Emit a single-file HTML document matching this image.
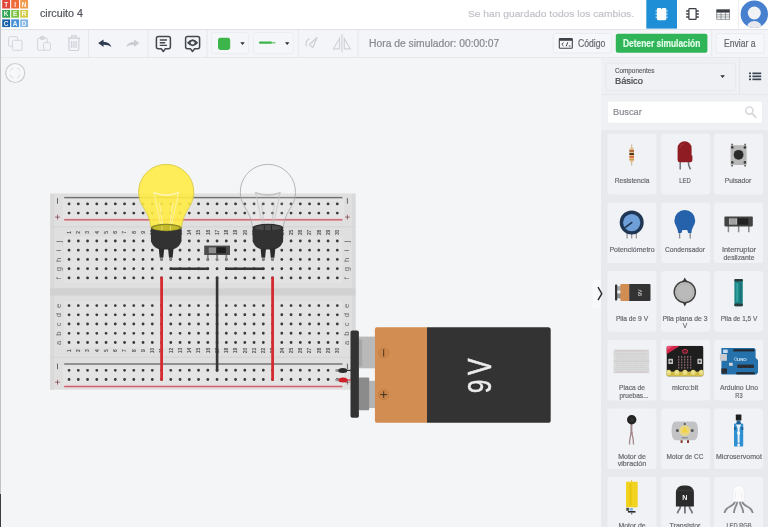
<!DOCTYPE html>
<html lang="es">
<head>
<meta charset="utf-8">
<title>circuito 4</title>
<style>
*{box-sizing:border-box;margin:0;padding:0}
html,body{width:768px;height:527px;overflow:hidden;background:#f4f5f7;font-family:"Liberation Sans",sans-serif;}
#app{position:relative;width:768px;height:527px;overflow:hidden;background:#f4f5f7;will-change:transform}
#app>div,#app>svg,#app>span{position:absolute}
#topbar{left:0;top:0;width:768px;height:29px;background:#fff}
#toolbar{left:0;top:28.5px;width:768px;height:29.5px;background:#f4f5f8;border-top:1px solid #e2e3e7;border-bottom:1px solid #e7e8ec}
#canvas{left:0;top:58px;width:601px;height:469px;background:#f4f5f7}
#panel{left:600.6px;top:58px;width:167.4px;height:469px;background:#eff0f3}
#plist{left:600.6px;top:129.5px;width:167.4px;height:398px;background:#e7e9ed}
#leftedge2{left:0;top:494px;width:1px;height:33px;background:#3c3c3e}
#leftedge{left:0;top:0;width:0.9px;height:527px;background:#c2c2c2}
.t{position:absolute;white-space:nowrap;line-height:12px;height:12px;margin-top:-6px;display:block;-webkit-text-stroke:0.2px currentColor}
.c{text-align:center}
.tile{background:#f1f2f5;border-radius:3px;width:49.200px;height:61.200px}
.sep{width:1px;background:#e4e5e9}
.btn{border-radius:2px}
svg{overflow:visible}
svg text{font-family:"Liberation Sans",sans-serif}
</style>
</head>
<body>
<div id="app">
<div id="topbar"></div><div id="toolbar"></div><div id="canvas"></div><div id="panel"></div><div id="plist"></div>
<svg id="gfx" width="768" height="527" viewBox="0 0 768 527" style="left:0;top:0">
<rect x="605.800" y="63.300" width="129.600" height="27" rx="2" fill="#f0f1f4" stroke="#e5e6ea" stroke-width="0.800"/>
<path d="M720.300 75.300h4.600l-2.300 2.700z" fill="#2b2e33"/>
<rect x="739" y="58.500" width="0.800" height="36" fill="#e3e4e8"/>
<rect x="602" y="94" width="166" height="0.800" fill="#e5e6ea"/>
<g fill="#3a4654"><rect x="749" y="72.500" width="2" height="1.700"/><rect x="752.400" y="72.500" width="8.800" height="1.700"/><rect x="749" y="75.500" width="2" height="1.700"/><rect x="752.400" y="75.500" width="8.800" height="1.700"/><rect x="749" y="78.500" width="2" height="1.700"/><rect x="752.400" y="78.500" width="8.800" height="1.700"/></g>
<rect x="608" y="101.800" width="154" height="21" rx="1.500" fill="#ffffff"/>
<g fill="none" stroke="#d8dade" stroke-width="1.700"><circle cx="749.400" cy="110.600" r="3.600"/><path d="M752.300 113.600l3.300 3.500" stroke-width="2.100" stroke-linecap="round"/></g>
<path d="M594.500 280h6.300v28h-6.300a2 2 0 0 1-2-2v-24a2 2 0 0 1 2-2z" fill="#f8f9fb"/>
<path d="M598 287.200l3.800 6.500l-3.800 6.500" fill="none" stroke="#26282c" stroke-width="1.400"/>
<rect x="607.4" y="133.7" width="49" height="60.700" rx="3" fill="#f1f2f5"/>
<rect x="661.1" y="133.7" width="49" height="60.700" rx="3" fill="#f1f2f5"/>
<rect x="714.1" y="133.7" width="49" height="60.700" rx="3" fill="#f1f2f5"/>
<rect x="607.4" y="202.4" width="49" height="60.700" rx="3" fill="#f1f2f5"/>
<rect x="661.1" y="202.4" width="49" height="60.700" rx="3" fill="#f1f2f5"/>
<rect x="714.1" y="202.4" width="49" height="60.700" rx="3" fill="#f1f2f5"/>
<rect x="607.4" y="271.1" width="49" height="60.700" rx="3" fill="#f1f2f5"/>
<rect x="661.1" y="271.1" width="49" height="60.700" rx="3" fill="#f1f2f5"/>
<rect x="714.1" y="271.1" width="49" height="60.700" rx="3" fill="#f1f2f5"/>
<rect x="607.4" y="339.7" width="49" height="60.700" rx="3" fill="#f1f2f5"/>
<rect x="661.1" y="339.7" width="49" height="60.700" rx="3" fill="#f1f2f5"/>
<rect x="714.1" y="339.7" width="49" height="60.700" rx="3" fill="#f1f2f5"/>
<rect x="607.4" y="408.4" width="49" height="60.700" rx="3" fill="#f1f2f5"/>
<rect x="661.1" y="408.4" width="49" height="60.700" rx="3" fill="#f1f2f5"/>
<rect x="714.1" y="408.4" width="49" height="60.700" rx="3" fill="#f1f2f5"/>
<rect x="607.4" y="476.9" width="49" height="60.700" rx="3" fill="#f1f2f5"/>
<rect x="661.1" y="476.9" width="49" height="60.700" rx="3" fill="#f1f2f5"/>
<rect x="714.1" y="476.9" width="49" height="60.700" rx="3" fill="#f1f2f5"/>
<g><path d="M631.7 144.400v21.200" stroke="#c7b08e" stroke-width="1"/><rect x="629.4000000000001" y="147.600" width="4.600" height="14.400" rx="2" fill="#e4c08d"/><rect x="629.4000000000001" y="150.200" width="4.600" height="1.500" fill="#a0522d"/><rect x="629.4000000000001" y="153.200" width="4.600" height="1.600" fill="#2a1a12"/><rect x="629.4000000000001" y="156.200" width="4.600" height="1.500" fill="#d9542b"/><rect x="629.4000000000001" y="159" width="4.600" height="1.200" fill="#c9a24a"/></g>
<g><path d="M680.2 161v8.400M688.4 161l0.300 4.400l1.800 4" stroke="#6f7177" stroke-width="1.500" fill="none"/><path d="M677.6 159.300v-11.100a7 7 0 0 1 14 0v7.200h0.800v4.600a2.200 2.200 0 0 1-2.200 2.200h-10.400a2.200 2.200 0 0 1-2.200-2.200z" fill="#8f1c22"/><path d="M680.0 147.500a4.600 4.600 0 0 1 3.600-3.600" stroke="#a8343a" stroke-width="1" fill="none"/></g>
<g><path d="M732.1 143.800v22.600M745.1 143.800v22.600" stroke="#4a4a4a" stroke-width="1.500"/><rect x="730.6" y="145.200" width="16" height="19.800" fill="#b7b7b7"/><circle cx="738.6" cy="154.800" r="4.900" fill="#2a2a2a"/><circle cx="732.3000000000001" cy="147.400" r="1.300" fill="#3c3c3c"/><circle cx="744.9" cy="147.400" r="1.300" fill="#3c3c3c"/><circle cx="732.3000000000001" cy="162.400" r="1.300" fill="#3c3c3c"/><circle cx="744.9" cy="162.400" r="1.300" fill="#3c3c3c"/></g>
<g><path d="M627.1 233v5.500M631.7 233v5.500M636.3000000000001 233v5.500" stroke="#8d9096" stroke-width="1.200"/><circle cx="631.7" cy="222.600" r="12" fill="#1f3654"/><circle cx="631.7" cy="222.600" r="8.600" fill="#6e9fd9"/><path d="M631.7 222.600l-6.400 4.800" stroke="#1f3654" stroke-width="1.800" stroke-linecap="round"/></g>
<g><path d="M679.5999999999999 229v9.500M690.1999999999999 229v9.500" stroke="#8d9096" stroke-width="1.400"/><path d="M674.4 220.400a10.400 10.400 0 0 1 20.800 0c0 4.500-3.200 6-3.800 12.500h-3.200l-1-2.800h-4.800l-1 2.800h-3.200c-0.600-6.500-3.800-8-3.800-12.500z" fill="#2562ab"/></g>
<g><path d="M728.4 226v6.200M738.6 226v6.200M748.8000000000001 226v6.200" stroke="#8a8a8a" stroke-width="1.500"/><rect x="724.4" y="216.600" width="28.400" height="9.800" rx="0.800" fill="#424242"/><rect x="729.0" y="218.300" width="19.200" height="6.400" fill="#222"/><rect x="729.0" y="218.300" width="8.200" height="6.400" fill="#b5b5b5"/><path d="M731.0 218.300v6.400M733.0 218.300v6.400M735.0 218.300v6.400" stroke="#7d7d7d" stroke-width="0.700"/></g>
<g><rect x="617" y="286.200" width="4" height="4.400" fill="#a9a9a9"/><rect x="617" y="293.400" width="4" height="5" fill="#8e8e8e"/><rect x="615" y="284.600" width="2.200" height="15.800" rx="0.600" fill="#333"/><path d="M621.200 284h8v17h-8a0.800 0.800 0 0 1-0.800-0.800v-15.400a0.800 0.800 0 0 1 0.800-0.800z" fill="#d18d52"/><path d="M629.200 284h20.400a0.900 0.900 0 0 1 0.900 0.900v15.200a0.900 0.900 0 0 1-0.900 0.900h-20.400z" fill="#333"/><text transform="translate(641.600 292.600) rotate(-90)" text-anchor="middle" font-size="5.400" fill="#e6e6e6">9V</text></g>
<g><path d="M680.5999999999999 282.200q3.200-1.400 4.200-4.600q1 3.200 4.200 4.600zM680.5999999999999 301.800q3.200 1.400 4.200 4.600q1-3.200 4.200-4.600z" fill="#3a3a3a"/><circle cx="684.8" cy="292" r="11.300" fill="#404040"/><circle cx="684.8" cy="292" r="9.900" fill="#bababa"/><circle cx="684.8" cy="292" r="8.200" fill="none" stroke="#adadad" stroke-width="0.800"/></g>
<g><rect x="734.4" y="279" width="8.400" height="27.200" rx="1.200" fill="#1d8486"/><rect x="734.4" y="279" width="8.400" height="2.600" rx="1" fill="#2c3b3c"/><rect x="734.4" y="303.400" width="8.400" height="2.800" rx="1" fill="#2c3b3c"/><rect x="736.2" y="283.200" width="2" height="18.600" fill="#3aa9a6" fill-opacity="0.8"/><rect x="740.2" y="283.200" width="1.200" height="18.600" fill="#16696b"/></g>
<g><rect x="613.600" y="349.600" width="35.600" height="23.600" fill="#dadada"/><rect x="613.600" y="353" width="35.600" height="0.600" fill="#cdcdcd"/><rect x="613.600" y="369.400" width="35.600" height="0.600" fill="#cdcdcd"/><rect x="613.600" y="360.600" width="35.600" height="1.400" fill="#cfcfcf"/><rect x="615.500" y="350.700" width="31.800" height="0.500" fill="#c9b0b0"/><rect x="615.500" y="371.800" width="31.800" height="0.500" fill="#c9b0b0"/><path d="M616 355.200h30.800M616 357.200h30.800M616 359h30.800M616 363.600h30.800M616 365.600h30.800M616 367.400h30.800" stroke="#c9c9c9" stroke-width="0.600" stroke-dasharray="0.7 0.500"/></g>
<g><clipPath id="mb"><rect x="666.5" y="345.800" width="37" height="30.700" rx="2"/></clipPath><g clip-path="url(#mb)"><rect x="666.5" y="345.800" width="37" height="30.700" fill="#1e1e1e"/><path d="M666.5 345.800h13.500l-13.500 8.500z" fill="#d8264a"/><path d="M666.5 345.800h7l-7 4.500z" fill="#e8557a"/><rect x="666.5" y="371.600" width="37" height="5" fill="#cdb848"/><circle cx="668.6" cy="372.400" r="2.600" fill="#e6d875"/><circle cx="668.6" cy="372.200" r="0.900" fill="#f4ecb0"/><circle cx="676.8" cy="372.400" r="2.600" fill="#e6d875"/><circle cx="676.8" cy="372.200" r="0.900" fill="#f4ecb0"/><circle cx="685.0" cy="372.400" r="2.600" fill="#e6d875"/><circle cx="685.0" cy="372.200" r="0.900" fill="#f4ecb0"/><circle cx="693.2" cy="372.400" r="2.600" fill="#e6d875"/><circle cx="693.2" cy="372.200" r="0.900" fill="#f4ecb0"/><circle cx="701.4" cy="372.400" r="2.600" fill="#e6d875"/><circle cx="701.4" cy="372.200" r="0.900" fill="#f4ecb0"/></g><rect x="668.4" y="358.800" width="4.600" height="5.200" rx="0.600" fill="#c4c4c4"/><rect x="697.4" y="358.800" width="4.600" height="5.200" rx="0.600" fill="#c4c4c4"/><circle cx="670.7" cy="361.400" r="1.100" fill="#333"/><circle cx="699.7" cy="361.400" r="1.100" fill="#333"/><rect x="682.4" y="349.600" width="5.200" height="3.600" rx="1.600" fill="#5a1a26" stroke="#d23c56" stroke-width="0.900"/><rect x="678.1" y="356.0" width="1.200" height="1.800" fill="#8a6a70"/><rect x="681.1" y="356.0" width="1.200" height="1.800" fill="#8a6a70"/><rect x="684.1" y="356.0" width="1.200" height="1.800" fill="#8a6a70"/><rect x="687.1" y="356.0" width="1.200" height="1.800" fill="#8a6a70"/><rect x="690.1" y="356.0" width="1.200" height="1.800" fill="#8a6a70"/><rect x="678.1" y="358.7" width="1.200" height="1.800" fill="#8a6a70"/><rect x="681.1" y="358.7" width="1.200" height="1.800" fill="#8a6a70"/><rect x="684.1" y="358.7" width="1.200" height="1.800" fill="#8a6a70"/><rect x="687.1" y="358.7" width="1.200" height="1.800" fill="#8a6a70"/><rect x="690.1" y="358.7" width="1.200" height="1.800" fill="#8a6a70"/><rect x="678.1" y="361.4" width="1.200" height="1.800" fill="#8a6a70"/><rect x="681.1" y="361.4" width="1.200" height="1.800" fill="#8a6a70"/><rect x="684.1" y="361.4" width="1.200" height="1.800" fill="#8a6a70"/><rect x="687.1" y="361.4" width="1.200" height="1.800" fill="#8a6a70"/><rect x="690.1" y="361.4" width="1.200" height="1.800" fill="#8a6a70"/><rect x="678.1" y="364.1" width="1.200" height="1.800" fill="#8a6a70"/><rect x="681.1" y="364.1" width="1.200" height="1.800" fill="#8a6a70"/><rect x="684.1" y="364.1" width="1.200" height="1.800" fill="#8a6a70"/><rect x="687.1" y="364.1" width="1.200" height="1.800" fill="#8a6a70"/><rect x="690.1" y="364.1" width="1.200" height="1.800" fill="#8a6a70"/><rect x="678.1" y="366.8" width="1.200" height="1.800" fill="#8a6a70"/><rect x="681.1" y="366.8" width="1.200" height="1.800" fill="#8a6a70"/><rect x="684.1" y="366.8" width="1.200" height="1.800" fill="#8a6a70"/><rect x="687.1" y="366.8" width="1.200" height="1.800" fill="#8a6a70"/><rect x="690.1" y="366.8" width="1.200" height="1.800" fill="#8a6a70"/></g>
<g><path d="M721.4000000000001 348h32.800l1.400 1.400v8.400l2.400 2.200v12.400l-1.600 2.200h-35z" fill="#2571ab"/><rect x="719.9000000000001" y="354" width="7" height="6.800" fill="#c9ccd0"/><rect x="721.4000000000001" y="368.400" width="5.600" height="5.200" fill="#2b2f35"/><rect x="733.3000000000001" y="349.200" width="21" height="2.200" fill="#23272c"/><rect x="736.3000000000001" y="372.200" width="18.400" height="2.200" fill="#23272c"/><rect x="737.3000000000001" y="364.600" width="16.600" height="3.400" fill="#2a2e33"/><rect x="723.1" y="349.600" width="4.600" height="3.400" fill="#c8dcef"/><text x="741.9000000000001" y="360.800" text-anchor="middle" font-size="4.400" font-weight="700" fill="#d6e8f7">UNO</text><circle cx="735.7" cy="359" r="1.500" fill="none" stroke="#d6e8f7" stroke-width="0.500"/><rect x="729.1" y="362.800" width="3.600" height="3" fill="#d4d8dc"/></g>
<g><path d="M631.4000000000001 424v9.500" fill="none" stroke="#a08a8c" stroke-width="2"/><path d="M631.1 432c0 4-1.800 5-1.600 12.600M631.9000000000001 432c0 4 1.800 5 1.600 12.600" fill="none" stroke="#a4888a" stroke-width="1.300"/><circle cx="631.7" cy="419.800" r="4.700" fill="#222"/><circle cx="631.7" cy="419.800" r="2.400" fill="#303030"/></g>
<g><rect x="680.5999999999999" y="439" width="2" height="4" fill="#8a3a2e"/><rect x="687.0" y="439" width="2" height="4" fill="#8a3a2e"/><path d="M675.8 421.400h18c3 0 4.200 4 4.200 9.400s-1.200 9.400-4.200 9.400h-18c-3 0-4.200-4-4.200-9.400s1.200-9.400 4.200-9.400z" fill="#c3c3c6"/><rect x="681.8" y="437.200" width="6" height="1.200" fill="#8a8a8a"/><circle cx="684.8" cy="430.600" r="5.400" fill="#e9d685"/><path d="M684.8 426.800l3.200 5.600h-6.400z" fill="#f3d23c"/><circle cx="677.4" cy="430.600" r="1.500" fill="#555"/><circle cx="692.1999999999999" cy="430.600" r="1.500" fill="#555"/><circle cx="684.8" cy="424" r="1.200" fill="#666"/></g>
<g><rect x="734.0" y="423.600" width="9.200" height="23" rx="0.800" fill="#2e8fd1"/><rect x="735.8000000000001" y="414.600" width="5.600" height="6" rx="0.600" fill="#1f1f1f"/><path d="M737.0 420.400h3.200l1 4h-5.200z" fill="#1c5f96"/><path d="M736.0 424.500l2.600 6l2.600-6z" fill="#e9f1f8"/><rect x="737.6" y="428" width="2" height="15" rx="1" fill="#e9f1f8"/><circle cx="738.6" cy="433" r="1.600" fill="#f5f9fc"/><rect x="734.0" y="427" width="1.800" height="3" fill="#1c5f96"/><rect x="741.4" y="427" width="1.800" height="3" fill="#1c5f96"/><rect x="737.4" y="443.600" width="2.400" height="3" fill="#f2f3f5"/></g>
<g><rect x="631.3000000000001" y="480.200" width="0.800" height="2" fill="#caa800"/><rect x="626.0" y="481.800" width="11.700" height="25.600" rx="0.800" fill="#f2d31f"/><rect x="629.3000000000001" y="483.500" width="2.400" height="22" fill="#e9c70f"/><rect x="626.5" y="507.600" width="10.400" height="3.400" fill="#f0f0f0"/><rect x="626.3000000000001" y="507.800" width="2.600" height="3" fill="#4a4a4a"/><rect x="629.5" y="508.200" width="3.400" height="2.400" fill="#7ab0e0"/><rect x="627.9000000000001" y="511" width="7.600" height="1.600" fill="#2b2b2b"/><rect x="631.1" y="512.600" width="1.200" height="1.800" fill="#666"/></g>
<g><path d="M680.3 505v2c0 2.500-2.600 3-2.800 6.400M684.9 505v8.400M689.5 505v2c0 2.500 2.600 3 2.800 6.400" fill="none" stroke="#74777d" stroke-width="1.800"/><path d="M675.9 506.400v-13.800a7.200 7.200 0 0 1 7.200-7.200h3.600a7.200 7.200 0 0 1 7.200 7.200v13.800z" fill="#2b2b2b"/><path d="M675.9 490.600h18" stroke="#444" stroke-width="0.600"/><text x="684.9" y="500.200" text-anchor="middle" font-size="7.200" font-weight="700" fill="#f2f2f2">N</text></g>
<g><path d="M735.2 501c-1 6.500-10 4.500-10.800 12M737.4 501c0 5-3.400 6-3.400 12M739.8000000000001 501c0 5 3.400 6 3.400 12M742.0 501c1 6.500 10 4.500 10.800 12" fill="none" stroke="#85888d" stroke-width="1.800"/><path d="M732.8000000000001 501.600v-10.400a5.800 5.800 0 0 1 11.600 0v10.400z" fill="#fbfbfc" stroke="#e9eaec" stroke-width="0.600"/><path d="M735.4 492.500v6M741.8000000000001 492.500v6" stroke="#ededf0" stroke-width="1"/></g>
<rect x="50.3" y="193.0" width="305.2" height="196.7" fill="#dfdfdf"/>
<rect x="62.5" y="199" width="281.5" height="19.5" fill="#e4e4e4"/>
<rect x="62.5" y="365.5" width="281.5" height="19.5" fill="#e4e4e4"/>
<rect x="64" y="236.5" width="278" height="46.5" fill="#e3e3e3"/>
<rect x="64" y="301" width="278" height="46.5" fill="#e3e3e3"/>
<rect x="50.3" y="193.0" width="3.6" height="196.7" fill="#d9d9d9"/>
<rect x="352.1" y="193.0" width="3.4" height="196.7" fill="#d9d9d9"/>
<rect x="50.3" y="193.0" width="305.2" height="1" fill="#e9e9e9"/>
<rect x="50.3" y="226.4" width="305.2" height="0.9" fill="#d3d3d3"/>
<rect x="50.3" y="356.8" width="305.2" height="0.9" fill="#d3d3d3"/>
<rect x="50.3" y="288.3" width="305.2" height="7.2" fill="#d1d1d1"/>
<rect x="64.2" y="196.9" width="278.2" height="1.4" fill="#707070"/>
<rect x="64.2" y="363.3" width="278.2" height="1.4" fill="#707070"/>
<rect x="64.2" y="218.0" width="278.2" height="3.4" fill="#edd5d8"/>
<rect x="64.2" y="219.1" width="278.2" height="1.4" fill="#c4636d"/>
<rect x="64.2" y="384.7" width="278.2" height="3.4" fill="#edd5d8"/>
<rect x="64.2" y="385.8" width="278.2" height="1.4" fill="#c4636d"/>
<path fill="#3a3a3a" d="M67.63 203.9a1.42 1.42 0 1 0 2.84 0a1.42 1.42 0 1 0-2.84 0zM76.88 203.9a1.42 1.42 0 1 0 2.84 0a1.42 1.42 0 1 0-2.84 0zM86.13 203.9a1.42 1.42 0 1 0 2.84 0a1.42 1.42 0 1 0-2.84 0zM95.38 203.9a1.42 1.42 0 1 0 2.84 0a1.42 1.42 0 1 0-2.84 0zM104.63 203.9a1.42 1.42 0 1 0 2.84 0a1.42 1.42 0 1 0-2.84 0zM113.88 203.9a1.42 1.42 0 1 0 2.84 0a1.42 1.42 0 1 0-2.84 0zM123.13 203.9a1.42 1.42 0 1 0 2.84 0a1.42 1.42 0 1 0-2.84 0zM132.38 203.9a1.42 1.42 0 1 0 2.84 0a1.42 1.42 0 1 0-2.84 0zM141.63 203.9a1.42 1.42 0 1 0 2.84 0a1.42 1.42 0 1 0-2.84 0zM150.88 203.9a1.42 1.42 0 1 0 2.84 0a1.42 1.42 0 1 0-2.84 0zM160.13 203.9a1.42 1.42 0 1 0 2.84 0a1.42 1.42 0 1 0-2.84 0zM169.38 203.9a1.42 1.42 0 1 0 2.84 0a1.42 1.42 0 1 0-2.84 0zM178.63 203.9a1.42 1.42 0 1 0 2.84 0a1.42 1.42 0 1 0-2.84 0zM187.88 203.9a1.42 1.42 0 1 0 2.84 0a1.42 1.42 0 1 0-2.84 0zM197.13 203.9a1.42 1.42 0 1 0 2.84 0a1.42 1.42 0 1 0-2.84 0zM206.38 203.9a1.42 1.42 0 1 0 2.84 0a1.42 1.42 0 1 0-2.84 0zM215.63 203.9a1.42 1.42 0 1 0 2.84 0a1.42 1.42 0 1 0-2.84 0zM224.88 203.9a1.42 1.42 0 1 0 2.84 0a1.42 1.42 0 1 0-2.84 0zM234.13 203.9a1.42 1.42 0 1 0 2.84 0a1.42 1.42 0 1 0-2.84 0zM243.38 203.9a1.42 1.42 0 1 0 2.84 0a1.42 1.42 0 1 0-2.84 0zM252.63 203.9a1.42 1.42 0 1 0 2.84 0a1.42 1.42 0 1 0-2.84 0zM261.88 203.9a1.42 1.42 0 1 0 2.84 0a1.42 1.42 0 1 0-2.84 0zM271.13 203.9a1.42 1.42 0 1 0 2.84 0a1.42 1.42 0 1 0-2.84 0zM280.38 203.9a1.42 1.42 0 1 0 2.84 0a1.42 1.42 0 1 0-2.84 0zM289.63 203.9a1.42 1.42 0 1 0 2.84 0a1.42 1.42 0 1 0-2.84 0zM298.88 203.9a1.42 1.42 0 1 0 2.84 0a1.42 1.42 0 1 0-2.84 0zM308.13 203.9a1.42 1.42 0 1 0 2.84 0a1.42 1.42 0 1 0-2.84 0zM317.38 203.9a1.42 1.42 0 1 0 2.84 0a1.42 1.42 0 1 0-2.84 0zM326.63 203.9a1.42 1.42 0 1 0 2.84 0a1.42 1.42 0 1 0-2.84 0zM335.88 203.9a1.42 1.42 0 1 0 2.84 0a1.42 1.42 0 1 0-2.84 0zM67.63 213.1a1.42 1.42 0 1 0 2.84 0a1.42 1.42 0 1 0-2.84 0zM76.88 213.1a1.42 1.42 0 1 0 2.84 0a1.42 1.42 0 1 0-2.84 0zM86.13 213.1a1.42 1.42 0 1 0 2.84 0a1.42 1.42 0 1 0-2.84 0zM95.38 213.1a1.42 1.42 0 1 0 2.84 0a1.42 1.42 0 1 0-2.84 0zM104.63 213.1a1.42 1.42 0 1 0 2.84 0a1.42 1.42 0 1 0-2.84 0zM113.88 213.1a1.42 1.42 0 1 0 2.84 0a1.42 1.42 0 1 0-2.84 0zM123.13 213.1a1.42 1.42 0 1 0 2.84 0a1.42 1.42 0 1 0-2.84 0zM132.38 213.1a1.42 1.42 0 1 0 2.84 0a1.42 1.42 0 1 0-2.84 0zM141.63 213.1a1.42 1.42 0 1 0 2.84 0a1.42 1.42 0 1 0-2.84 0zM150.88 213.1a1.42 1.42 0 1 0 2.84 0a1.42 1.42 0 1 0-2.84 0zM160.13 213.1a1.42 1.42 0 1 0 2.84 0a1.42 1.42 0 1 0-2.84 0zM169.38 213.1a1.42 1.42 0 1 0 2.84 0a1.42 1.42 0 1 0-2.84 0zM178.63 213.1a1.42 1.42 0 1 0 2.84 0a1.42 1.42 0 1 0-2.84 0zM187.88 213.1a1.42 1.42 0 1 0 2.84 0a1.42 1.42 0 1 0-2.84 0zM197.13 213.1a1.42 1.42 0 1 0 2.84 0a1.42 1.42 0 1 0-2.84 0zM206.38 213.1a1.42 1.42 0 1 0 2.84 0a1.42 1.42 0 1 0-2.84 0zM215.63 213.1a1.42 1.42 0 1 0 2.84 0a1.42 1.42 0 1 0-2.84 0zM224.88 213.1a1.42 1.42 0 1 0 2.84 0a1.42 1.42 0 1 0-2.84 0zM234.13 213.1a1.42 1.42 0 1 0 2.84 0a1.42 1.42 0 1 0-2.84 0zM243.38 213.1a1.42 1.42 0 1 0 2.84 0a1.42 1.42 0 1 0-2.84 0zM252.63 213.1a1.42 1.42 0 1 0 2.84 0a1.42 1.42 0 1 0-2.84 0zM261.88 213.1a1.42 1.42 0 1 0 2.84 0a1.42 1.42 0 1 0-2.84 0zM271.13 213.1a1.42 1.42 0 1 0 2.84 0a1.42 1.42 0 1 0-2.84 0zM280.38 213.1a1.42 1.42 0 1 0 2.84 0a1.42 1.42 0 1 0-2.84 0zM289.63 213.1a1.42 1.42 0 1 0 2.84 0a1.42 1.42 0 1 0-2.84 0zM298.88 213.1a1.42 1.42 0 1 0 2.84 0a1.42 1.42 0 1 0-2.84 0zM308.13 213.1a1.42 1.42 0 1 0 2.84 0a1.42 1.42 0 1 0-2.84 0zM317.38 213.1a1.42 1.42 0 1 0 2.84 0a1.42 1.42 0 1 0-2.84 0zM326.63 213.1a1.42 1.42 0 1 0 2.84 0a1.42 1.42 0 1 0-2.84 0zM335.88 213.1a1.42 1.42 0 1 0 2.84 0a1.42 1.42 0 1 0-2.84 0zM67.63 370.3a1.42 1.42 0 1 0 2.84 0a1.42 1.42 0 1 0-2.84 0zM76.88 370.3a1.42 1.42 0 1 0 2.84 0a1.42 1.42 0 1 0-2.84 0zM86.13 370.3a1.42 1.42 0 1 0 2.84 0a1.42 1.42 0 1 0-2.84 0zM95.38 370.3a1.42 1.42 0 1 0 2.84 0a1.42 1.42 0 1 0-2.84 0zM104.63 370.3a1.42 1.42 0 1 0 2.84 0a1.42 1.42 0 1 0-2.84 0zM113.88 370.3a1.42 1.42 0 1 0 2.84 0a1.42 1.42 0 1 0-2.84 0zM123.13 370.3a1.42 1.42 0 1 0 2.84 0a1.42 1.42 0 1 0-2.84 0zM132.38 370.3a1.42 1.42 0 1 0 2.84 0a1.42 1.42 0 1 0-2.84 0zM141.63 370.3a1.42 1.42 0 1 0 2.84 0a1.42 1.42 0 1 0-2.84 0zM150.88 370.3a1.42 1.42 0 1 0 2.84 0a1.42 1.42 0 1 0-2.84 0zM160.13 370.3a1.42 1.42 0 1 0 2.84 0a1.42 1.42 0 1 0-2.84 0zM169.38 370.3a1.42 1.42 0 1 0 2.84 0a1.42 1.42 0 1 0-2.84 0zM178.63 370.3a1.42 1.42 0 1 0 2.84 0a1.42 1.42 0 1 0-2.84 0zM187.88 370.3a1.42 1.42 0 1 0 2.84 0a1.42 1.42 0 1 0-2.84 0zM197.13 370.3a1.42 1.42 0 1 0 2.84 0a1.42 1.42 0 1 0-2.84 0zM206.38 370.3a1.42 1.42 0 1 0 2.84 0a1.42 1.42 0 1 0-2.84 0zM215.63 370.3a1.42 1.42 0 1 0 2.84 0a1.42 1.42 0 1 0-2.84 0zM224.88 370.3a1.42 1.42 0 1 0 2.84 0a1.42 1.42 0 1 0-2.84 0zM234.13 370.3a1.42 1.42 0 1 0 2.84 0a1.42 1.42 0 1 0-2.84 0zM243.38 370.3a1.42 1.42 0 1 0 2.84 0a1.42 1.42 0 1 0-2.84 0zM252.63 370.3a1.42 1.42 0 1 0 2.84 0a1.42 1.42 0 1 0-2.84 0zM261.88 370.3a1.42 1.42 0 1 0 2.84 0a1.42 1.42 0 1 0-2.84 0zM271.13 370.3a1.42 1.42 0 1 0 2.84 0a1.42 1.42 0 1 0-2.84 0zM280.38 370.3a1.42 1.42 0 1 0 2.84 0a1.42 1.42 0 1 0-2.84 0zM289.63 370.3a1.42 1.42 0 1 0 2.84 0a1.42 1.42 0 1 0-2.84 0zM298.88 370.3a1.42 1.42 0 1 0 2.84 0a1.42 1.42 0 1 0-2.84 0zM308.13 370.3a1.42 1.42 0 1 0 2.84 0a1.42 1.42 0 1 0-2.84 0zM317.38 370.3a1.42 1.42 0 1 0 2.84 0a1.42 1.42 0 1 0-2.84 0zM326.63 370.3a1.42 1.42 0 1 0 2.84 0a1.42 1.42 0 1 0-2.84 0zM335.88 370.3a1.42 1.42 0 1 0 2.84 0a1.42 1.42 0 1 0-2.84 0zM67.63 379.5a1.42 1.42 0 1 0 2.84 0a1.42 1.42 0 1 0-2.84 0zM76.88 379.5a1.42 1.42 0 1 0 2.84 0a1.42 1.42 0 1 0-2.84 0zM86.13 379.5a1.42 1.42 0 1 0 2.84 0a1.42 1.42 0 1 0-2.84 0zM95.38 379.5a1.42 1.42 0 1 0 2.84 0a1.42 1.42 0 1 0-2.84 0zM104.63 379.5a1.42 1.42 0 1 0 2.84 0a1.42 1.42 0 1 0-2.84 0zM113.88 379.5a1.42 1.42 0 1 0 2.84 0a1.42 1.42 0 1 0-2.84 0zM123.13 379.5a1.42 1.42 0 1 0 2.84 0a1.42 1.42 0 1 0-2.84 0zM132.38 379.5a1.42 1.42 0 1 0 2.84 0a1.42 1.42 0 1 0-2.84 0zM141.63 379.5a1.42 1.42 0 1 0 2.84 0a1.42 1.42 0 1 0-2.84 0zM150.88 379.5a1.42 1.42 0 1 0 2.84 0a1.42 1.42 0 1 0-2.84 0zM160.13 379.5a1.42 1.42 0 1 0 2.84 0a1.42 1.42 0 1 0-2.84 0zM169.38 379.5a1.42 1.42 0 1 0 2.84 0a1.42 1.42 0 1 0-2.84 0zM178.63 379.5a1.42 1.42 0 1 0 2.84 0a1.42 1.42 0 1 0-2.84 0zM187.88 379.5a1.42 1.42 0 1 0 2.84 0a1.42 1.42 0 1 0-2.84 0zM197.13 379.5a1.42 1.42 0 1 0 2.84 0a1.42 1.42 0 1 0-2.84 0zM206.38 379.5a1.42 1.42 0 1 0 2.84 0a1.42 1.42 0 1 0-2.84 0zM215.63 379.5a1.42 1.42 0 1 0 2.84 0a1.42 1.42 0 1 0-2.84 0zM224.88 379.5a1.42 1.42 0 1 0 2.84 0a1.42 1.42 0 1 0-2.84 0zM234.13 379.5a1.42 1.42 0 1 0 2.84 0a1.42 1.42 0 1 0-2.84 0zM243.38 379.5a1.42 1.42 0 1 0 2.84 0a1.42 1.42 0 1 0-2.84 0zM252.63 379.5a1.42 1.42 0 1 0 2.84 0a1.42 1.42 0 1 0-2.84 0zM261.88 379.5a1.42 1.42 0 1 0 2.84 0a1.42 1.42 0 1 0-2.84 0zM271.13 379.5a1.42 1.42 0 1 0 2.84 0a1.42 1.42 0 1 0-2.84 0zM280.38 379.5a1.42 1.42 0 1 0 2.84 0a1.42 1.42 0 1 0-2.84 0zM289.63 379.5a1.42 1.42 0 1 0 2.84 0a1.42 1.42 0 1 0-2.84 0zM298.88 379.5a1.42 1.42 0 1 0 2.84 0a1.42 1.42 0 1 0-2.84 0zM308.13 379.5a1.42 1.42 0 1 0 2.84 0a1.42 1.42 0 1 0-2.84 0zM317.38 379.5a1.42 1.42 0 1 0 2.84 0a1.42 1.42 0 1 0-2.84 0zM326.63 379.5a1.42 1.42 0 1 0 2.84 0a1.42 1.42 0 1 0-2.84 0zM335.88 379.5a1.42 1.42 0 1 0 2.84 0a1.42 1.42 0 1 0-2.84 0zM67.63 241.0a1.42 1.42 0 1 0 2.84 0a1.42 1.42 0 1 0-2.84 0zM76.88 241.0a1.42 1.42 0 1 0 2.84 0a1.42 1.42 0 1 0-2.84 0zM86.13 241.0a1.42 1.42 0 1 0 2.84 0a1.42 1.42 0 1 0-2.84 0zM95.38 241.0a1.42 1.42 0 1 0 2.84 0a1.42 1.42 0 1 0-2.84 0zM104.63 241.0a1.42 1.42 0 1 0 2.84 0a1.42 1.42 0 1 0-2.84 0zM113.88 241.0a1.42 1.42 0 1 0 2.84 0a1.42 1.42 0 1 0-2.84 0zM123.13 241.0a1.42 1.42 0 1 0 2.84 0a1.42 1.42 0 1 0-2.84 0zM132.38 241.0a1.42 1.42 0 1 0 2.84 0a1.42 1.42 0 1 0-2.84 0zM141.63 241.0a1.42 1.42 0 1 0 2.84 0a1.42 1.42 0 1 0-2.84 0zM150.88 241.0a1.42 1.42 0 1 0 2.84 0a1.42 1.42 0 1 0-2.84 0zM160.13 241.0a1.42 1.42 0 1 0 2.84 0a1.42 1.42 0 1 0-2.84 0zM169.38 241.0a1.42 1.42 0 1 0 2.84 0a1.42 1.42 0 1 0-2.84 0zM178.63 241.0a1.42 1.42 0 1 0 2.84 0a1.42 1.42 0 1 0-2.84 0zM187.88 241.0a1.42 1.42 0 1 0 2.84 0a1.42 1.42 0 1 0-2.84 0zM197.13 241.0a1.42 1.42 0 1 0 2.84 0a1.42 1.42 0 1 0-2.84 0zM206.38 241.0a1.42 1.42 0 1 0 2.84 0a1.42 1.42 0 1 0-2.84 0zM215.63 241.0a1.42 1.42 0 1 0 2.84 0a1.42 1.42 0 1 0-2.84 0zM224.88 241.0a1.42 1.42 0 1 0 2.84 0a1.42 1.42 0 1 0-2.84 0zM234.13 241.0a1.42 1.42 0 1 0 2.84 0a1.42 1.42 0 1 0-2.84 0zM243.38 241.0a1.42 1.42 0 1 0 2.84 0a1.42 1.42 0 1 0-2.84 0zM252.63 241.0a1.42 1.42 0 1 0 2.84 0a1.42 1.42 0 1 0-2.84 0zM261.88 241.0a1.42 1.42 0 1 0 2.84 0a1.42 1.42 0 1 0-2.84 0zM271.13 241.0a1.42 1.42 0 1 0 2.84 0a1.42 1.42 0 1 0-2.84 0zM280.38 241.0a1.42 1.42 0 1 0 2.84 0a1.42 1.42 0 1 0-2.84 0zM289.63 241.0a1.42 1.42 0 1 0 2.84 0a1.42 1.42 0 1 0-2.84 0zM298.88 241.0a1.42 1.42 0 1 0 2.84 0a1.42 1.42 0 1 0-2.84 0zM308.13 241.0a1.42 1.42 0 1 0 2.84 0a1.42 1.42 0 1 0-2.84 0zM317.38 241.0a1.42 1.42 0 1 0 2.84 0a1.42 1.42 0 1 0-2.84 0zM326.63 241.0a1.42 1.42 0 1 0 2.84 0a1.42 1.42 0 1 0-2.84 0zM335.88 241.0a1.42 1.42 0 1 0 2.84 0a1.42 1.42 0 1 0-2.84 0zM67.63 250.2a1.42 1.42 0 1 0 2.84 0a1.42 1.42 0 1 0-2.84 0zM76.88 250.2a1.42 1.42 0 1 0 2.84 0a1.42 1.42 0 1 0-2.84 0zM86.13 250.2a1.42 1.42 0 1 0 2.84 0a1.42 1.42 0 1 0-2.84 0zM95.38 250.2a1.42 1.42 0 1 0 2.84 0a1.42 1.42 0 1 0-2.84 0zM104.63 250.2a1.42 1.42 0 1 0 2.84 0a1.42 1.42 0 1 0-2.84 0zM113.88 250.2a1.42 1.42 0 1 0 2.84 0a1.42 1.42 0 1 0-2.84 0zM123.13 250.2a1.42 1.42 0 1 0 2.84 0a1.42 1.42 0 1 0-2.84 0zM132.38 250.2a1.42 1.42 0 1 0 2.84 0a1.42 1.42 0 1 0-2.84 0zM141.63 250.2a1.42 1.42 0 1 0 2.84 0a1.42 1.42 0 1 0-2.84 0zM150.88 250.2a1.42 1.42 0 1 0 2.84 0a1.42 1.42 0 1 0-2.84 0zM160.13 250.2a1.42 1.42 0 1 0 2.84 0a1.42 1.42 0 1 0-2.84 0zM169.38 250.2a1.42 1.42 0 1 0 2.84 0a1.42 1.42 0 1 0-2.84 0zM178.63 250.2a1.42 1.42 0 1 0 2.84 0a1.42 1.42 0 1 0-2.84 0zM187.88 250.2a1.42 1.42 0 1 0 2.84 0a1.42 1.42 0 1 0-2.84 0zM197.13 250.2a1.42 1.42 0 1 0 2.84 0a1.42 1.42 0 1 0-2.84 0zM206.38 250.2a1.42 1.42 0 1 0 2.84 0a1.42 1.42 0 1 0-2.84 0zM215.63 250.2a1.42 1.42 0 1 0 2.84 0a1.42 1.42 0 1 0-2.84 0zM224.88 250.2a1.42 1.42 0 1 0 2.84 0a1.42 1.42 0 1 0-2.84 0zM234.13 250.2a1.42 1.42 0 1 0 2.84 0a1.42 1.42 0 1 0-2.84 0zM243.38 250.2a1.42 1.42 0 1 0 2.84 0a1.42 1.42 0 1 0-2.84 0zM252.63 250.2a1.42 1.42 0 1 0 2.84 0a1.42 1.42 0 1 0-2.84 0zM261.88 250.2a1.42 1.42 0 1 0 2.84 0a1.42 1.42 0 1 0-2.84 0zM271.13 250.2a1.42 1.42 0 1 0 2.84 0a1.42 1.42 0 1 0-2.84 0zM280.38 250.2a1.42 1.42 0 1 0 2.84 0a1.42 1.42 0 1 0-2.84 0zM289.63 250.2a1.42 1.42 0 1 0 2.84 0a1.42 1.42 0 1 0-2.84 0zM298.88 250.2a1.42 1.42 0 1 0 2.84 0a1.42 1.42 0 1 0-2.84 0zM308.13 250.2a1.42 1.42 0 1 0 2.84 0a1.42 1.42 0 1 0-2.84 0zM317.38 250.2a1.42 1.42 0 1 0 2.84 0a1.42 1.42 0 1 0-2.84 0zM326.63 250.2a1.42 1.42 0 1 0 2.84 0a1.42 1.42 0 1 0-2.84 0zM335.88 250.2a1.42 1.42 0 1 0 2.84 0a1.42 1.42 0 1 0-2.84 0zM67.63 259.4a1.42 1.42 0 1 0 2.84 0a1.42 1.42 0 1 0-2.84 0zM76.88 259.4a1.42 1.42 0 1 0 2.84 0a1.42 1.42 0 1 0-2.84 0zM86.13 259.4a1.42 1.42 0 1 0 2.84 0a1.42 1.42 0 1 0-2.84 0zM95.38 259.4a1.42 1.42 0 1 0 2.84 0a1.42 1.42 0 1 0-2.84 0zM104.63 259.4a1.42 1.42 0 1 0 2.84 0a1.42 1.42 0 1 0-2.84 0zM113.88 259.4a1.42 1.42 0 1 0 2.84 0a1.42 1.42 0 1 0-2.84 0zM123.13 259.4a1.42 1.42 0 1 0 2.84 0a1.42 1.42 0 1 0-2.84 0zM132.38 259.4a1.42 1.42 0 1 0 2.84 0a1.42 1.42 0 1 0-2.84 0zM141.63 259.4a1.42 1.42 0 1 0 2.84 0a1.42 1.42 0 1 0-2.84 0zM150.88 259.4a1.42 1.42 0 1 0 2.84 0a1.42 1.42 0 1 0-2.84 0zM160.13 259.4a1.42 1.42 0 1 0 2.84 0a1.42 1.42 0 1 0-2.84 0zM169.38 259.4a1.42 1.42 0 1 0 2.84 0a1.42 1.42 0 1 0-2.84 0zM178.63 259.4a1.42 1.42 0 1 0 2.84 0a1.42 1.42 0 1 0-2.84 0zM187.88 259.4a1.42 1.42 0 1 0 2.84 0a1.42 1.42 0 1 0-2.84 0zM197.13 259.4a1.42 1.42 0 1 0 2.84 0a1.42 1.42 0 1 0-2.84 0zM206.38 259.4a1.42 1.42 0 1 0 2.84 0a1.42 1.42 0 1 0-2.84 0zM215.63 259.4a1.42 1.42 0 1 0 2.84 0a1.42 1.42 0 1 0-2.84 0zM224.88 259.4a1.42 1.42 0 1 0 2.84 0a1.42 1.42 0 1 0-2.84 0zM234.13 259.4a1.42 1.42 0 1 0 2.84 0a1.42 1.42 0 1 0-2.84 0zM243.38 259.4a1.42 1.42 0 1 0 2.84 0a1.42 1.42 0 1 0-2.84 0zM252.63 259.4a1.42 1.42 0 1 0 2.84 0a1.42 1.42 0 1 0-2.84 0zM261.88 259.4a1.42 1.42 0 1 0 2.84 0a1.42 1.42 0 1 0-2.84 0zM271.13 259.4a1.42 1.42 0 1 0 2.84 0a1.42 1.42 0 1 0-2.84 0zM280.38 259.4a1.42 1.42 0 1 0 2.84 0a1.42 1.42 0 1 0-2.84 0zM289.63 259.4a1.42 1.42 0 1 0 2.84 0a1.42 1.42 0 1 0-2.84 0zM298.88 259.4a1.42 1.42 0 1 0 2.84 0a1.42 1.42 0 1 0-2.84 0zM308.13 259.4a1.42 1.42 0 1 0 2.84 0a1.42 1.42 0 1 0-2.84 0zM317.38 259.4a1.42 1.42 0 1 0 2.84 0a1.42 1.42 0 1 0-2.84 0zM326.63 259.4a1.42 1.42 0 1 0 2.84 0a1.42 1.42 0 1 0-2.84 0zM335.88 259.4a1.42 1.42 0 1 0 2.84 0a1.42 1.42 0 1 0-2.84 0zM67.63 268.7a1.42 1.42 0 1 0 2.84 0a1.42 1.42 0 1 0-2.84 0zM76.88 268.7a1.42 1.42 0 1 0 2.84 0a1.42 1.42 0 1 0-2.84 0zM86.13 268.7a1.42 1.42 0 1 0 2.84 0a1.42 1.42 0 1 0-2.84 0zM95.38 268.7a1.42 1.42 0 1 0 2.84 0a1.42 1.42 0 1 0-2.84 0zM104.63 268.7a1.42 1.42 0 1 0 2.84 0a1.42 1.42 0 1 0-2.84 0zM113.88 268.7a1.42 1.42 0 1 0 2.84 0a1.42 1.42 0 1 0-2.84 0zM123.13 268.7a1.42 1.42 0 1 0 2.84 0a1.42 1.42 0 1 0-2.84 0zM132.38 268.7a1.42 1.42 0 1 0 2.84 0a1.42 1.42 0 1 0-2.84 0zM141.63 268.7a1.42 1.42 0 1 0 2.84 0a1.42 1.42 0 1 0-2.84 0zM150.88 268.7a1.42 1.42 0 1 0 2.84 0a1.42 1.42 0 1 0-2.84 0zM160.13 268.7a1.42 1.42 0 1 0 2.84 0a1.42 1.42 0 1 0-2.84 0zM169.38 268.7a1.42 1.42 0 1 0 2.84 0a1.42 1.42 0 1 0-2.84 0zM178.63 268.7a1.42 1.42 0 1 0 2.84 0a1.42 1.42 0 1 0-2.84 0zM187.88 268.7a1.42 1.42 0 1 0 2.84 0a1.42 1.42 0 1 0-2.84 0zM197.13 268.7a1.42 1.42 0 1 0 2.84 0a1.42 1.42 0 1 0-2.84 0zM206.38 268.7a1.42 1.42 0 1 0 2.84 0a1.42 1.42 0 1 0-2.84 0zM215.63 268.7a1.42 1.42 0 1 0 2.84 0a1.42 1.42 0 1 0-2.84 0zM224.88 268.7a1.42 1.42 0 1 0 2.84 0a1.42 1.42 0 1 0-2.84 0zM234.13 268.7a1.42 1.42 0 1 0 2.84 0a1.42 1.42 0 1 0-2.84 0zM243.38 268.7a1.42 1.42 0 1 0 2.84 0a1.42 1.42 0 1 0-2.84 0zM252.63 268.7a1.42 1.42 0 1 0 2.84 0a1.42 1.42 0 1 0-2.84 0zM261.88 268.7a1.42 1.42 0 1 0 2.84 0a1.42 1.42 0 1 0-2.84 0zM271.13 268.7a1.42 1.42 0 1 0 2.84 0a1.42 1.42 0 1 0-2.84 0zM280.38 268.7a1.42 1.42 0 1 0 2.84 0a1.42 1.42 0 1 0-2.84 0zM289.63 268.7a1.42 1.42 0 1 0 2.84 0a1.42 1.42 0 1 0-2.84 0zM298.88 268.7a1.42 1.42 0 1 0 2.84 0a1.42 1.42 0 1 0-2.84 0zM308.13 268.7a1.42 1.42 0 1 0 2.84 0a1.42 1.42 0 1 0-2.84 0zM317.38 268.7a1.42 1.42 0 1 0 2.84 0a1.42 1.42 0 1 0-2.84 0zM326.63 268.7a1.42 1.42 0 1 0 2.84 0a1.42 1.42 0 1 0-2.84 0zM335.88 268.7a1.42 1.42 0 1 0 2.84 0a1.42 1.42 0 1 0-2.84 0zM67.63 277.9a1.42 1.42 0 1 0 2.84 0a1.42 1.42 0 1 0-2.84 0zM76.88 277.9a1.42 1.42 0 1 0 2.84 0a1.42 1.42 0 1 0-2.84 0zM86.13 277.9a1.42 1.42 0 1 0 2.84 0a1.42 1.42 0 1 0-2.84 0zM95.38 277.9a1.42 1.42 0 1 0 2.84 0a1.42 1.42 0 1 0-2.84 0zM104.63 277.9a1.42 1.42 0 1 0 2.84 0a1.42 1.42 0 1 0-2.84 0zM113.88 277.9a1.42 1.42 0 1 0 2.84 0a1.42 1.42 0 1 0-2.84 0zM123.13 277.9a1.42 1.42 0 1 0 2.84 0a1.42 1.42 0 1 0-2.84 0zM132.38 277.9a1.42 1.42 0 1 0 2.84 0a1.42 1.42 0 1 0-2.84 0zM141.63 277.9a1.42 1.42 0 1 0 2.84 0a1.42 1.42 0 1 0-2.84 0zM150.88 277.9a1.42 1.42 0 1 0 2.84 0a1.42 1.42 0 1 0-2.84 0zM160.13 277.9a1.42 1.42 0 1 0 2.84 0a1.42 1.42 0 1 0-2.84 0zM169.38 277.9a1.42 1.42 0 1 0 2.84 0a1.42 1.42 0 1 0-2.84 0zM178.63 277.9a1.42 1.42 0 1 0 2.84 0a1.42 1.42 0 1 0-2.84 0zM187.88 277.9a1.42 1.42 0 1 0 2.84 0a1.42 1.42 0 1 0-2.84 0zM197.13 277.9a1.42 1.42 0 1 0 2.84 0a1.42 1.42 0 1 0-2.84 0zM206.38 277.9a1.42 1.42 0 1 0 2.84 0a1.42 1.42 0 1 0-2.84 0zM215.63 277.9a1.42 1.42 0 1 0 2.84 0a1.42 1.42 0 1 0-2.84 0zM224.88 277.9a1.42 1.42 0 1 0 2.84 0a1.42 1.42 0 1 0-2.84 0zM234.13 277.9a1.42 1.42 0 1 0 2.84 0a1.42 1.42 0 1 0-2.84 0zM243.38 277.9a1.42 1.42 0 1 0 2.84 0a1.42 1.42 0 1 0-2.84 0zM252.63 277.9a1.42 1.42 0 1 0 2.84 0a1.42 1.42 0 1 0-2.84 0zM261.88 277.9a1.42 1.42 0 1 0 2.84 0a1.42 1.42 0 1 0-2.84 0zM271.13 277.9a1.42 1.42 0 1 0 2.84 0a1.42 1.42 0 1 0-2.84 0zM280.38 277.9a1.42 1.42 0 1 0 2.84 0a1.42 1.42 0 1 0-2.84 0zM289.63 277.9a1.42 1.42 0 1 0 2.84 0a1.42 1.42 0 1 0-2.84 0zM298.88 277.9a1.42 1.42 0 1 0 2.84 0a1.42 1.42 0 1 0-2.84 0zM308.13 277.9a1.42 1.42 0 1 0 2.84 0a1.42 1.42 0 1 0-2.84 0zM317.38 277.9a1.42 1.42 0 1 0 2.84 0a1.42 1.42 0 1 0-2.84 0zM326.63 277.9a1.42 1.42 0 1 0 2.84 0a1.42 1.42 0 1 0-2.84 0zM335.88 277.9a1.42 1.42 0 1 0 2.84 0a1.42 1.42 0 1 0-2.84 0zM67.63 305.6a1.42 1.42 0 1 0 2.84 0a1.42 1.42 0 1 0-2.84 0zM76.88 305.6a1.42 1.42 0 1 0 2.84 0a1.42 1.42 0 1 0-2.84 0zM86.13 305.6a1.42 1.42 0 1 0 2.84 0a1.42 1.42 0 1 0-2.84 0zM95.38 305.6a1.42 1.42 0 1 0 2.84 0a1.42 1.42 0 1 0-2.84 0zM104.63 305.6a1.42 1.42 0 1 0 2.84 0a1.42 1.42 0 1 0-2.84 0zM113.88 305.6a1.42 1.42 0 1 0 2.84 0a1.42 1.42 0 1 0-2.84 0zM123.13 305.6a1.42 1.42 0 1 0 2.84 0a1.42 1.42 0 1 0-2.84 0zM132.38 305.6a1.42 1.42 0 1 0 2.84 0a1.42 1.42 0 1 0-2.84 0zM141.63 305.6a1.42 1.42 0 1 0 2.84 0a1.42 1.42 0 1 0-2.84 0zM150.88 305.6a1.42 1.42 0 1 0 2.84 0a1.42 1.42 0 1 0-2.84 0zM160.13 305.6a1.42 1.42 0 1 0 2.84 0a1.42 1.42 0 1 0-2.84 0zM169.38 305.6a1.42 1.42 0 1 0 2.84 0a1.42 1.42 0 1 0-2.84 0zM178.63 305.6a1.42 1.42 0 1 0 2.84 0a1.42 1.42 0 1 0-2.84 0zM187.88 305.6a1.42 1.42 0 1 0 2.84 0a1.42 1.42 0 1 0-2.84 0zM197.13 305.6a1.42 1.42 0 1 0 2.84 0a1.42 1.42 0 1 0-2.84 0zM206.38 305.6a1.42 1.42 0 1 0 2.84 0a1.42 1.42 0 1 0-2.84 0zM215.63 305.6a1.42 1.42 0 1 0 2.84 0a1.42 1.42 0 1 0-2.84 0zM224.88 305.6a1.42 1.42 0 1 0 2.84 0a1.42 1.42 0 1 0-2.84 0zM234.13 305.6a1.42 1.42 0 1 0 2.84 0a1.42 1.42 0 1 0-2.84 0zM243.38 305.6a1.42 1.42 0 1 0 2.84 0a1.42 1.42 0 1 0-2.84 0zM252.63 305.6a1.42 1.42 0 1 0 2.84 0a1.42 1.42 0 1 0-2.84 0zM261.88 305.6a1.42 1.42 0 1 0 2.84 0a1.42 1.42 0 1 0-2.84 0zM271.13 305.6a1.42 1.42 0 1 0 2.84 0a1.42 1.42 0 1 0-2.84 0zM280.38 305.6a1.42 1.42 0 1 0 2.84 0a1.42 1.42 0 1 0-2.84 0zM289.63 305.6a1.42 1.42 0 1 0 2.84 0a1.42 1.42 0 1 0-2.84 0zM298.88 305.6a1.42 1.42 0 1 0 2.84 0a1.42 1.42 0 1 0-2.84 0zM308.13 305.6a1.42 1.42 0 1 0 2.84 0a1.42 1.42 0 1 0-2.84 0zM317.38 305.6a1.42 1.42 0 1 0 2.84 0a1.42 1.42 0 1 0-2.84 0zM326.63 305.6a1.42 1.42 0 1 0 2.84 0a1.42 1.42 0 1 0-2.84 0zM335.88 305.6a1.42 1.42 0 1 0 2.84 0a1.42 1.42 0 1 0-2.84 0zM67.63 314.8a1.42 1.42 0 1 0 2.84 0a1.42 1.42 0 1 0-2.84 0zM76.88 314.8a1.42 1.42 0 1 0 2.84 0a1.42 1.42 0 1 0-2.84 0zM86.13 314.8a1.42 1.42 0 1 0 2.84 0a1.42 1.42 0 1 0-2.84 0zM95.38 314.8a1.42 1.42 0 1 0 2.84 0a1.42 1.42 0 1 0-2.84 0zM104.63 314.8a1.42 1.42 0 1 0 2.84 0a1.42 1.42 0 1 0-2.84 0zM113.88 314.8a1.42 1.42 0 1 0 2.84 0a1.42 1.42 0 1 0-2.84 0zM123.13 314.8a1.42 1.42 0 1 0 2.84 0a1.42 1.42 0 1 0-2.84 0zM132.38 314.8a1.42 1.42 0 1 0 2.84 0a1.42 1.42 0 1 0-2.84 0zM141.63 314.8a1.42 1.42 0 1 0 2.84 0a1.42 1.42 0 1 0-2.84 0zM150.88 314.8a1.42 1.42 0 1 0 2.84 0a1.42 1.42 0 1 0-2.84 0zM160.13 314.8a1.42 1.42 0 1 0 2.84 0a1.42 1.42 0 1 0-2.84 0zM169.38 314.8a1.42 1.42 0 1 0 2.84 0a1.42 1.42 0 1 0-2.84 0zM178.63 314.8a1.42 1.42 0 1 0 2.84 0a1.42 1.42 0 1 0-2.84 0zM187.88 314.8a1.42 1.42 0 1 0 2.84 0a1.42 1.42 0 1 0-2.84 0zM197.13 314.8a1.42 1.42 0 1 0 2.84 0a1.42 1.42 0 1 0-2.84 0zM206.38 314.8a1.42 1.42 0 1 0 2.84 0a1.42 1.42 0 1 0-2.84 0zM215.63 314.8a1.42 1.42 0 1 0 2.84 0a1.42 1.42 0 1 0-2.84 0zM224.88 314.8a1.42 1.42 0 1 0 2.84 0a1.42 1.42 0 1 0-2.84 0zM234.13 314.8a1.42 1.42 0 1 0 2.84 0a1.42 1.42 0 1 0-2.84 0zM243.38 314.8a1.42 1.42 0 1 0 2.84 0a1.42 1.42 0 1 0-2.84 0zM252.63 314.8a1.42 1.42 0 1 0 2.84 0a1.42 1.42 0 1 0-2.84 0zM261.88 314.8a1.42 1.42 0 1 0 2.84 0a1.42 1.42 0 1 0-2.84 0zM271.13 314.8a1.42 1.42 0 1 0 2.84 0a1.42 1.42 0 1 0-2.84 0zM280.38 314.8a1.42 1.42 0 1 0 2.84 0a1.42 1.42 0 1 0-2.84 0zM289.63 314.8a1.42 1.42 0 1 0 2.84 0a1.42 1.42 0 1 0-2.84 0zM298.88 314.8a1.42 1.42 0 1 0 2.84 0a1.42 1.42 0 1 0-2.84 0zM308.13 314.8a1.42 1.42 0 1 0 2.84 0a1.42 1.42 0 1 0-2.84 0zM317.38 314.8a1.42 1.42 0 1 0 2.84 0a1.42 1.42 0 1 0-2.84 0zM326.63 314.8a1.42 1.42 0 1 0 2.84 0a1.42 1.42 0 1 0-2.84 0zM335.88 314.8a1.42 1.42 0 1 0 2.84 0a1.42 1.42 0 1 0-2.84 0zM67.63 324.0a1.42 1.42 0 1 0 2.84 0a1.42 1.42 0 1 0-2.84 0zM76.88 324.0a1.42 1.42 0 1 0 2.84 0a1.42 1.42 0 1 0-2.84 0zM86.13 324.0a1.42 1.42 0 1 0 2.84 0a1.42 1.42 0 1 0-2.84 0zM95.38 324.0a1.42 1.42 0 1 0 2.84 0a1.42 1.42 0 1 0-2.84 0zM104.63 324.0a1.42 1.42 0 1 0 2.84 0a1.42 1.42 0 1 0-2.84 0zM113.88 324.0a1.42 1.42 0 1 0 2.84 0a1.42 1.42 0 1 0-2.84 0zM123.13 324.0a1.42 1.42 0 1 0 2.84 0a1.42 1.42 0 1 0-2.84 0zM132.38 324.0a1.42 1.42 0 1 0 2.84 0a1.42 1.42 0 1 0-2.84 0zM141.63 324.0a1.42 1.42 0 1 0 2.84 0a1.42 1.42 0 1 0-2.84 0zM150.88 324.0a1.42 1.42 0 1 0 2.84 0a1.42 1.42 0 1 0-2.84 0zM160.13 324.0a1.42 1.42 0 1 0 2.84 0a1.42 1.42 0 1 0-2.84 0zM169.38 324.0a1.42 1.42 0 1 0 2.84 0a1.42 1.42 0 1 0-2.84 0zM178.63 324.0a1.42 1.42 0 1 0 2.84 0a1.42 1.42 0 1 0-2.84 0zM187.88 324.0a1.42 1.42 0 1 0 2.84 0a1.42 1.42 0 1 0-2.84 0zM197.13 324.0a1.42 1.42 0 1 0 2.84 0a1.42 1.42 0 1 0-2.84 0zM206.38 324.0a1.42 1.42 0 1 0 2.84 0a1.42 1.42 0 1 0-2.84 0zM215.63 324.0a1.42 1.42 0 1 0 2.84 0a1.42 1.42 0 1 0-2.84 0zM224.88 324.0a1.42 1.42 0 1 0 2.84 0a1.42 1.42 0 1 0-2.84 0zM234.13 324.0a1.42 1.42 0 1 0 2.84 0a1.42 1.42 0 1 0-2.84 0zM243.38 324.0a1.42 1.42 0 1 0 2.84 0a1.42 1.42 0 1 0-2.84 0zM252.63 324.0a1.42 1.42 0 1 0 2.84 0a1.42 1.42 0 1 0-2.84 0zM261.88 324.0a1.42 1.42 0 1 0 2.84 0a1.42 1.42 0 1 0-2.84 0zM271.13 324.0a1.42 1.42 0 1 0 2.84 0a1.42 1.42 0 1 0-2.84 0zM280.38 324.0a1.42 1.42 0 1 0 2.84 0a1.42 1.42 0 1 0-2.84 0zM289.63 324.0a1.42 1.42 0 1 0 2.84 0a1.42 1.42 0 1 0-2.84 0zM298.88 324.0a1.42 1.42 0 1 0 2.84 0a1.42 1.42 0 1 0-2.84 0zM308.13 324.0a1.42 1.42 0 1 0 2.84 0a1.42 1.42 0 1 0-2.84 0zM317.38 324.0a1.42 1.42 0 1 0 2.84 0a1.42 1.42 0 1 0-2.84 0zM326.63 324.0a1.42 1.42 0 1 0 2.84 0a1.42 1.42 0 1 0-2.84 0zM335.88 324.0a1.42 1.42 0 1 0 2.84 0a1.42 1.42 0 1 0-2.84 0zM67.63 333.3a1.42 1.42 0 1 0 2.84 0a1.42 1.42 0 1 0-2.84 0zM76.88 333.3a1.42 1.42 0 1 0 2.84 0a1.42 1.42 0 1 0-2.84 0zM86.13 333.3a1.42 1.42 0 1 0 2.84 0a1.42 1.42 0 1 0-2.84 0zM95.38 333.3a1.42 1.42 0 1 0 2.84 0a1.42 1.42 0 1 0-2.84 0zM104.63 333.3a1.42 1.42 0 1 0 2.84 0a1.42 1.42 0 1 0-2.84 0zM113.88 333.3a1.42 1.42 0 1 0 2.84 0a1.42 1.42 0 1 0-2.84 0zM123.13 333.3a1.42 1.42 0 1 0 2.84 0a1.42 1.42 0 1 0-2.84 0zM132.38 333.3a1.42 1.42 0 1 0 2.84 0a1.42 1.42 0 1 0-2.84 0zM141.63 333.3a1.42 1.42 0 1 0 2.84 0a1.42 1.42 0 1 0-2.84 0zM150.88 333.3a1.42 1.42 0 1 0 2.84 0a1.42 1.42 0 1 0-2.84 0zM160.13 333.3a1.42 1.42 0 1 0 2.84 0a1.42 1.42 0 1 0-2.84 0zM169.38 333.3a1.42 1.42 0 1 0 2.84 0a1.42 1.42 0 1 0-2.84 0zM178.63 333.3a1.42 1.42 0 1 0 2.84 0a1.42 1.42 0 1 0-2.84 0zM187.88 333.3a1.42 1.42 0 1 0 2.84 0a1.42 1.42 0 1 0-2.84 0zM197.13 333.3a1.42 1.42 0 1 0 2.84 0a1.42 1.42 0 1 0-2.84 0zM206.38 333.3a1.42 1.42 0 1 0 2.84 0a1.42 1.42 0 1 0-2.84 0zM215.63 333.3a1.42 1.42 0 1 0 2.84 0a1.42 1.42 0 1 0-2.84 0zM224.88 333.3a1.42 1.42 0 1 0 2.84 0a1.42 1.42 0 1 0-2.84 0zM234.13 333.3a1.42 1.42 0 1 0 2.84 0a1.42 1.42 0 1 0-2.84 0zM243.38 333.3a1.42 1.42 0 1 0 2.84 0a1.42 1.42 0 1 0-2.84 0zM252.63 333.3a1.42 1.42 0 1 0 2.84 0a1.42 1.42 0 1 0-2.84 0zM261.88 333.3a1.42 1.42 0 1 0 2.84 0a1.42 1.42 0 1 0-2.84 0zM271.13 333.3a1.42 1.42 0 1 0 2.84 0a1.42 1.42 0 1 0-2.84 0zM280.38 333.3a1.42 1.42 0 1 0 2.84 0a1.42 1.42 0 1 0-2.84 0zM289.63 333.3a1.42 1.42 0 1 0 2.84 0a1.42 1.42 0 1 0-2.84 0zM298.88 333.3a1.42 1.42 0 1 0 2.84 0a1.42 1.42 0 1 0-2.84 0zM308.13 333.3a1.42 1.42 0 1 0 2.84 0a1.42 1.42 0 1 0-2.84 0zM317.38 333.3a1.42 1.42 0 1 0 2.84 0a1.42 1.42 0 1 0-2.84 0zM326.63 333.3a1.42 1.42 0 1 0 2.84 0a1.42 1.42 0 1 0-2.84 0zM335.88 333.3a1.42 1.42 0 1 0 2.84 0a1.42 1.42 0 1 0-2.84 0zM67.63 342.5a1.42 1.42 0 1 0 2.84 0a1.42 1.42 0 1 0-2.84 0zM76.88 342.5a1.42 1.42 0 1 0 2.84 0a1.42 1.42 0 1 0-2.84 0zM86.13 342.5a1.42 1.42 0 1 0 2.84 0a1.42 1.42 0 1 0-2.84 0zM95.38 342.5a1.42 1.42 0 1 0 2.84 0a1.42 1.42 0 1 0-2.84 0zM104.63 342.5a1.42 1.42 0 1 0 2.84 0a1.42 1.42 0 1 0-2.84 0zM113.88 342.5a1.42 1.42 0 1 0 2.84 0a1.42 1.42 0 1 0-2.84 0zM123.13 342.5a1.42 1.42 0 1 0 2.84 0a1.42 1.42 0 1 0-2.84 0zM132.38 342.5a1.42 1.42 0 1 0 2.84 0a1.42 1.42 0 1 0-2.84 0zM141.63 342.5a1.42 1.42 0 1 0 2.84 0a1.42 1.42 0 1 0-2.84 0zM150.88 342.5a1.42 1.42 0 1 0 2.84 0a1.42 1.42 0 1 0-2.84 0zM160.13 342.5a1.42 1.42 0 1 0 2.84 0a1.42 1.42 0 1 0-2.84 0zM169.38 342.5a1.42 1.42 0 1 0 2.84 0a1.42 1.42 0 1 0-2.84 0zM178.63 342.5a1.42 1.42 0 1 0 2.84 0a1.42 1.42 0 1 0-2.84 0zM187.88 342.5a1.42 1.42 0 1 0 2.84 0a1.42 1.42 0 1 0-2.84 0zM197.13 342.5a1.42 1.42 0 1 0 2.84 0a1.42 1.42 0 1 0-2.84 0zM206.38 342.5a1.42 1.42 0 1 0 2.84 0a1.42 1.42 0 1 0-2.84 0zM215.63 342.5a1.42 1.42 0 1 0 2.84 0a1.42 1.42 0 1 0-2.84 0zM224.88 342.5a1.42 1.42 0 1 0 2.84 0a1.42 1.42 0 1 0-2.84 0zM234.13 342.5a1.42 1.42 0 1 0 2.84 0a1.42 1.42 0 1 0-2.84 0zM243.38 342.5a1.42 1.42 0 1 0 2.84 0a1.42 1.42 0 1 0-2.84 0zM252.63 342.5a1.42 1.42 0 1 0 2.84 0a1.42 1.42 0 1 0-2.84 0zM261.88 342.5a1.42 1.42 0 1 0 2.84 0a1.42 1.42 0 1 0-2.84 0zM271.13 342.5a1.42 1.42 0 1 0 2.84 0a1.42 1.42 0 1 0-2.84 0zM280.38 342.5a1.42 1.42 0 1 0 2.84 0a1.42 1.42 0 1 0-2.84 0zM289.63 342.5a1.42 1.42 0 1 0 2.84 0a1.42 1.42 0 1 0-2.84 0zM298.88 342.5a1.42 1.42 0 1 0 2.84 0a1.42 1.42 0 1 0-2.84 0zM308.13 342.5a1.42 1.42 0 1 0 2.84 0a1.42 1.42 0 1 0-2.84 0zM317.38 342.5a1.42 1.42 0 1 0 2.84 0a1.42 1.42 0 1 0-2.84 0zM326.63 342.5a1.42 1.42 0 1 0 2.84 0a1.42 1.42 0 1 0-2.84 0zM335.88 342.5a1.42 1.42 0 1 0 2.84 0a1.42 1.42 0 1 0-2.84 0z"/>
<rect x="57.00" y="198.1" width="1" height="5.6" fill="#666"/>
<rect x="57.00" y="363.6" width="1" height="5.6" fill="#666"/>
<circle cx="57.5" cy="217.1" r="3.2" fill="#f0dadd" fill-opacity="0.6"/>
<path d="M55.1 217.1h4.8M57.5 214.7v4.8" stroke="#5e3640" stroke-width="0.65" fill="none"/>
<circle cx="57.5" cy="382.2" r="3.2" fill="#f0dadd" fill-opacity="0.6"/>
<path d="M55.1 382.2h4.8M57.5 379.8v4.8" stroke="#5e3640" stroke-width="0.65" fill="none"/>
<rect x="346.90" y="198.1" width="1" height="5.6" fill="#666"/>
<rect x="346.90" y="363.6" width="1" height="5.6" fill="#666"/>
<circle cx="347.4" cy="217.1" r="3.2" fill="#f0dadd" fill-opacity="0.6"/>
<path d="M345.0 217.1h4.8M347.4 214.7v4.8" stroke="#5e3640" stroke-width="0.65" fill="none"/>
<circle cx="347.4" cy="382.2" r="3.2" fill="#f0dadd" fill-opacity="0.6"/>
<path d="M345.0 382.2h4.8M347.4 379.8v4.8" stroke="#5e3640" stroke-width="0.65" fill="none"/>
<text transform="translate(70.75 232.4) rotate(-90) scale(0.95 1)" text-anchor="middle" font-size="5.1" fill="#4c4c4c" stroke="#4c4c4c" stroke-width="0.12">1</text>
<text transform="translate(70.75 350.6) rotate(-90) scale(0.95 1)" text-anchor="middle" font-size="5.1" fill="#4c4c4c" stroke="#4c4c4c" stroke-width="0.12">1</text>
<text transform="translate(80.00 232.4) rotate(-90) scale(0.95 1)" text-anchor="middle" font-size="5.1" fill="#4c4c4c" stroke="#4c4c4c" stroke-width="0.12">2</text>
<text transform="translate(80.00 350.6) rotate(-90) scale(0.95 1)" text-anchor="middle" font-size="5.1" fill="#4c4c4c" stroke="#4c4c4c" stroke-width="0.12">2</text>
<text transform="translate(89.25 232.4) rotate(-90) scale(0.95 1)" text-anchor="middle" font-size="5.1" fill="#4c4c4c" stroke="#4c4c4c" stroke-width="0.12">3</text>
<text transform="translate(89.25 350.6) rotate(-90) scale(0.95 1)" text-anchor="middle" font-size="5.1" fill="#4c4c4c" stroke="#4c4c4c" stroke-width="0.12">3</text>
<text transform="translate(98.50 232.4) rotate(-90) scale(0.95 1)" text-anchor="middle" font-size="5.1" fill="#4c4c4c" stroke="#4c4c4c" stroke-width="0.12">4</text>
<text transform="translate(98.50 350.6) rotate(-90) scale(0.95 1)" text-anchor="middle" font-size="5.1" fill="#4c4c4c" stroke="#4c4c4c" stroke-width="0.12">4</text>
<text transform="translate(107.75 232.4) rotate(-90) scale(0.95 1)" text-anchor="middle" font-size="5.1" fill="#4c4c4c" stroke="#4c4c4c" stroke-width="0.12">5</text>
<text transform="translate(107.75 350.6) rotate(-90) scale(0.95 1)" text-anchor="middle" font-size="5.1" fill="#4c4c4c" stroke="#4c4c4c" stroke-width="0.12">5</text>
<text transform="translate(117.00 232.4) rotate(-90) scale(0.95 1)" text-anchor="middle" font-size="5.1" fill="#4c4c4c" stroke="#4c4c4c" stroke-width="0.12">6</text>
<text transform="translate(117.00 350.6) rotate(-90) scale(0.95 1)" text-anchor="middle" font-size="5.1" fill="#4c4c4c" stroke="#4c4c4c" stroke-width="0.12">6</text>
<text transform="translate(126.25 232.4) rotate(-90) scale(0.95 1)" text-anchor="middle" font-size="5.1" fill="#4c4c4c" stroke="#4c4c4c" stroke-width="0.12">7</text>
<text transform="translate(126.25 350.6) rotate(-90) scale(0.95 1)" text-anchor="middle" font-size="5.1" fill="#4c4c4c" stroke="#4c4c4c" stroke-width="0.12">7</text>
<text transform="translate(135.50 232.4) rotate(-90) scale(0.95 1)" text-anchor="middle" font-size="5.1" fill="#4c4c4c" stroke="#4c4c4c" stroke-width="0.12">8</text>
<text transform="translate(135.50 350.6) rotate(-90) scale(0.95 1)" text-anchor="middle" font-size="5.1" fill="#4c4c4c" stroke="#4c4c4c" stroke-width="0.12">8</text>
<text transform="translate(144.75 232.4) rotate(-90) scale(0.95 1)" text-anchor="middle" font-size="5.1" fill="#4c4c4c" stroke="#4c4c4c" stroke-width="0.12">9</text>
<text transform="translate(144.75 350.6) rotate(-90) scale(0.95 1)" text-anchor="middle" font-size="5.1" fill="#4c4c4c" stroke="#4c4c4c" stroke-width="0.12">9</text>
<text transform="translate(154.00 232.4) rotate(-90) scale(0.95 1)" text-anchor="middle" font-size="5.1" fill="#4c4c4c" stroke="#4c4c4c" stroke-width="0.12">10</text>
<text transform="translate(154.00 350.6) rotate(-90) scale(0.95 1)" text-anchor="middle" font-size="5.1" fill="#4c4c4c" stroke="#4c4c4c" stroke-width="0.12">10</text>
<text transform="translate(163.25 232.4) rotate(-90) scale(0.95 1)" text-anchor="middle" font-size="5.1" fill="#4c4c4c" stroke="#4c4c4c" stroke-width="0.12">11</text>
<text transform="translate(163.25 350.6) rotate(-90) scale(0.95 1)" text-anchor="middle" font-size="5.1" fill="#4c4c4c" stroke="#4c4c4c" stroke-width="0.12">11</text>
<text transform="translate(172.50 232.4) rotate(-90) scale(0.95 1)" text-anchor="middle" font-size="5.1" fill="#4c4c4c" stroke="#4c4c4c" stroke-width="0.12">12</text>
<text transform="translate(172.50 350.6) rotate(-90) scale(0.95 1)" text-anchor="middle" font-size="5.1" fill="#4c4c4c" stroke="#4c4c4c" stroke-width="0.12">12</text>
<text transform="translate(181.75 232.4) rotate(-90) scale(0.95 1)" text-anchor="middle" font-size="5.1" fill="#4c4c4c" stroke="#4c4c4c" stroke-width="0.12">13</text>
<text transform="translate(181.75 350.6) rotate(-90) scale(0.95 1)" text-anchor="middle" font-size="5.1" fill="#4c4c4c" stroke="#4c4c4c" stroke-width="0.12">13</text>
<text transform="translate(191.00 232.4) rotate(-90) scale(0.95 1)" text-anchor="middle" font-size="5.1" fill="#4c4c4c" stroke="#4c4c4c" stroke-width="0.12">14</text>
<text transform="translate(191.00 350.6) rotate(-90) scale(0.95 1)" text-anchor="middle" font-size="5.1" fill="#4c4c4c" stroke="#4c4c4c" stroke-width="0.12">14</text>
<text transform="translate(200.25 232.4) rotate(-90) scale(0.95 1)" text-anchor="middle" font-size="5.1" fill="#4c4c4c" stroke="#4c4c4c" stroke-width="0.12">15</text>
<text transform="translate(200.25 350.6) rotate(-90) scale(0.95 1)" text-anchor="middle" font-size="5.1" fill="#4c4c4c" stroke="#4c4c4c" stroke-width="0.12">15</text>
<text transform="translate(209.50 232.4) rotate(-90) scale(0.95 1)" text-anchor="middle" font-size="5.1" fill="#4c4c4c" stroke="#4c4c4c" stroke-width="0.12">16</text>
<text transform="translate(209.50 350.6) rotate(-90) scale(0.95 1)" text-anchor="middle" font-size="5.1" fill="#4c4c4c" stroke="#4c4c4c" stroke-width="0.12">16</text>
<text transform="translate(218.75 232.4) rotate(-90) scale(0.95 1)" text-anchor="middle" font-size="5.1" fill="#4c4c4c" stroke="#4c4c4c" stroke-width="0.12">17</text>
<text transform="translate(218.75 350.6) rotate(-90) scale(0.95 1)" text-anchor="middle" font-size="5.1" fill="#4c4c4c" stroke="#4c4c4c" stroke-width="0.12">17</text>
<text transform="translate(228.00 232.4) rotate(-90) scale(0.95 1)" text-anchor="middle" font-size="5.1" fill="#4c4c4c" stroke="#4c4c4c" stroke-width="0.12">18</text>
<text transform="translate(228.00 350.6) rotate(-90) scale(0.95 1)" text-anchor="middle" font-size="5.1" fill="#4c4c4c" stroke="#4c4c4c" stroke-width="0.12">18</text>
<text transform="translate(237.25 232.4) rotate(-90) scale(0.95 1)" text-anchor="middle" font-size="5.1" fill="#4c4c4c" stroke="#4c4c4c" stroke-width="0.12">19</text>
<text transform="translate(237.25 350.6) rotate(-90) scale(0.95 1)" text-anchor="middle" font-size="5.1" fill="#4c4c4c" stroke="#4c4c4c" stroke-width="0.12">19</text>
<text transform="translate(246.50 232.4) rotate(-90) scale(0.95 1)" text-anchor="middle" font-size="5.1" fill="#4c4c4c" stroke="#4c4c4c" stroke-width="0.12">20</text>
<text transform="translate(246.50 350.6) rotate(-90) scale(0.95 1)" text-anchor="middle" font-size="5.1" fill="#4c4c4c" stroke="#4c4c4c" stroke-width="0.12">20</text>
<text transform="translate(255.75 232.4) rotate(-90) scale(0.95 1)" text-anchor="middle" font-size="5.1" fill="#4c4c4c" stroke="#4c4c4c" stroke-width="0.12">21</text>
<text transform="translate(255.75 350.6) rotate(-90) scale(0.95 1)" text-anchor="middle" font-size="5.1" fill="#4c4c4c" stroke="#4c4c4c" stroke-width="0.12">21</text>
<text transform="translate(265.00 232.4) rotate(-90) scale(0.95 1)" text-anchor="middle" font-size="5.1" fill="#4c4c4c" stroke="#4c4c4c" stroke-width="0.12">22</text>
<text transform="translate(265.00 350.6) rotate(-90) scale(0.95 1)" text-anchor="middle" font-size="5.1" fill="#4c4c4c" stroke="#4c4c4c" stroke-width="0.12">22</text>
<text transform="translate(274.25 232.4) rotate(-90) scale(0.95 1)" text-anchor="middle" font-size="5.1" fill="#4c4c4c" stroke="#4c4c4c" stroke-width="0.12">23</text>
<text transform="translate(274.25 350.6) rotate(-90) scale(0.95 1)" text-anchor="middle" font-size="5.1" fill="#4c4c4c" stroke="#4c4c4c" stroke-width="0.12">23</text>
<text transform="translate(283.50 232.4) rotate(-90) scale(0.95 1)" text-anchor="middle" font-size="5.1" fill="#4c4c4c" stroke="#4c4c4c" stroke-width="0.12">24</text>
<text transform="translate(283.50 350.6) rotate(-90) scale(0.95 1)" text-anchor="middle" font-size="5.1" fill="#4c4c4c" stroke="#4c4c4c" stroke-width="0.12">24</text>
<text transform="translate(292.75 232.4) rotate(-90) scale(0.95 1)" text-anchor="middle" font-size="5.1" fill="#4c4c4c" stroke="#4c4c4c" stroke-width="0.12">25</text>
<text transform="translate(292.75 350.6) rotate(-90) scale(0.95 1)" text-anchor="middle" font-size="5.1" fill="#4c4c4c" stroke="#4c4c4c" stroke-width="0.12">25</text>
<text transform="translate(302.00 232.4) rotate(-90) scale(0.95 1)" text-anchor="middle" font-size="5.1" fill="#4c4c4c" stroke="#4c4c4c" stroke-width="0.12">26</text>
<text transform="translate(302.00 350.6) rotate(-90) scale(0.95 1)" text-anchor="middle" font-size="5.1" fill="#4c4c4c" stroke="#4c4c4c" stroke-width="0.12">26</text>
<text transform="translate(311.25 232.4) rotate(-90) scale(0.95 1)" text-anchor="middle" font-size="5.1" fill="#4c4c4c" stroke="#4c4c4c" stroke-width="0.12">27</text>
<text transform="translate(311.25 350.6) rotate(-90) scale(0.95 1)" text-anchor="middle" font-size="5.1" fill="#4c4c4c" stroke="#4c4c4c" stroke-width="0.12">27</text>
<text transform="translate(320.50 232.4) rotate(-90) scale(0.95 1)" text-anchor="middle" font-size="5.1" fill="#4c4c4c" stroke="#4c4c4c" stroke-width="0.12">28</text>
<text transform="translate(320.50 350.6) rotate(-90) scale(0.95 1)" text-anchor="middle" font-size="5.1" fill="#4c4c4c" stroke="#4c4c4c" stroke-width="0.12">28</text>
<text transform="translate(329.75 232.4) rotate(-90) scale(0.95 1)" text-anchor="middle" font-size="5.1" fill="#4c4c4c" stroke="#4c4c4c" stroke-width="0.12">29</text>
<text transform="translate(329.75 350.6) rotate(-90) scale(0.95 1)" text-anchor="middle" font-size="5.1" fill="#4c4c4c" stroke="#4c4c4c" stroke-width="0.12">29</text>
<text transform="translate(339.00 232.4) rotate(-90) scale(0.95 1)" text-anchor="middle" font-size="5.1" fill="#4c4c4c" stroke="#4c4c4c" stroke-width="0.12">30</text>
<text transform="translate(339.00 350.6) rotate(-90) scale(0.95 1)" text-anchor="middle" font-size="5.1" fill="#4c4c4c" stroke="#4c4c4c" stroke-width="0.12">30</text>
<text transform="translate(61.4 241.4) rotate(-90)" text-anchor="middle" font-size="7.6" fill="#666">j</text>
<text transform="translate(349.2 241.4) rotate(-90)" text-anchor="middle" font-size="7.6" fill="#666">j</text>
<text transform="translate(61.4 250.6) rotate(-90)" text-anchor="middle" font-size="7.6" fill="#666">i</text>
<text transform="translate(349.2 250.6) rotate(-90)" text-anchor="middle" font-size="7.6" fill="#666">i</text>
<text transform="translate(61.4 259.8) rotate(-90)" text-anchor="middle" font-size="7.6" fill="#666">h</text>
<text transform="translate(349.2 259.8) rotate(-90)" text-anchor="middle" font-size="7.6" fill="#666">h</text>
<text transform="translate(61.4 269.1) rotate(-90)" text-anchor="middle" font-size="7.6" fill="#666">g</text>
<text transform="translate(349.2 269.1) rotate(-90)" text-anchor="middle" font-size="7.6" fill="#666">g</text>
<text transform="translate(61.4 278.3) rotate(-90)" text-anchor="middle" font-size="7.6" fill="#666">f</text>
<text transform="translate(349.2 278.3) rotate(-90)" text-anchor="middle" font-size="7.6" fill="#666">f</text>
<text transform="translate(61.4 306.0) rotate(-90)" text-anchor="middle" font-size="7.6" fill="#666">e</text>
<text transform="translate(349.2 306.0) rotate(-90)" text-anchor="middle" font-size="7.6" fill="#666">e</text>
<text transform="translate(61.4 315.2) rotate(-90)" text-anchor="middle" font-size="7.6" fill="#666">d</text>
<text transform="translate(349.2 315.2) rotate(-90)" text-anchor="middle" font-size="7.6" fill="#666">d</text>
<text transform="translate(61.4 324.4) rotate(-90)" text-anchor="middle" font-size="7.6" fill="#666">c</text>
<text transform="translate(349.2 324.4) rotate(-90)" text-anchor="middle" font-size="7.6" fill="#666">c</text>
<text transform="translate(61.4 333.7) rotate(-90)" text-anchor="middle" font-size="7.6" fill="#666">b</text>
<text transform="translate(349.2 333.7) rotate(-90)" text-anchor="middle" font-size="7.6" fill="#666">b</text>
<text transform="translate(61.4 342.9) rotate(-90)" text-anchor="middle" font-size="7.6" fill="#666">a</text>
<text transform="translate(349.2 342.9) rotate(-90)" text-anchor="middle" font-size="7.6" fill="#666">a</text>
<g><rect x="206.9" y="254" width="1.8" height="6.6" fill="#8a8a8a"/><rect x="216.2" y="254" width="1.8" height="6.6" fill="#8a8a8a"/><rect x="225.4" y="254" width="1.8" height="6.6" fill="#8a8a8a"/><rect x="204.2" y="245.6" width="25.8" height="9.4" fill="#4b4b4b"/><rect x="208.6" y="247.3" width="17.2" height="6" fill="#1f1f1f"/><rect x="208.6" y="247.3" width="7.6" height="6" fill="#8d8d8d"/></g>
<path d="M170.8 268.7H207.8M226.3 268.7H263.3" stroke="#333" stroke-width="2.6" stroke-linecap="round" fill="none"/>
<path d="M161.6 277.9V379.6M272.6 277.9V379.6" stroke="#d42a30" stroke-width="2.8" stroke-linecap="round" fill="none"/>
<path d="M217.1 277.9V370.4" stroke="#353535" stroke-width="2.6" stroke-linecap="round" fill="none"/>
<path d="M142.8 206.6A27.6 27.6 0 1 1 189.6 206.6C185.1 213.6 182.9 218.5 181.4 227.5L151.0 227.5C149.5 218.5 147.3 213.6 142.8 206.6Z" fill="#ffeb46" fill-opacity="0.9" stroke="#d6c63c" stroke-width="0.8"/>
<path d="M154.0 192.800q12.200 4.600 24.400 0" fill="none" stroke="#fbf4b4" stroke-width="1.600" stroke-linecap="round"/>
<path d="M154.0 193L161.4 228M178.4 193L171.0 228M159.6 203L163.0 228M172.8 203L169.4 228" fill="none" stroke="#fbf4b4" stroke-width="0.800"/>
<g transform="translate(0 -0.7)">
<path d="M150.9 228v11.500c0 6 4.200 9.800 9.600 10.700h11.400c5.400-0.900 9.600-4.700 9.600-10.700v-11.500z" fill="#323232"/>
<ellipse cx="166.175" cy="228.200" rx="15.300" ry="3.700" fill="#8d8a22"/>
<ellipse cx="166.175" cy="228.500" rx="13.300" ry="2.700" fill="#c4ba2c"/>
<path d="M162.0 226.500v4.600M170.4 226.500v4.600" stroke="#e6de74" stroke-width="0.900"/>
<path d="M158.8 249.500h5.400l-0.900 9h-3.600z" fill="#2b2b2b"/>
<rect x="160.4" y="258.400" width="2.200" height="2.600" fill="#8a8a8a"/>
<path d="M168.1 249.500h5.400l-0.900 9h-3.600z" fill="#2b2b2b"/>
<rect x="169.7" y="258.400" width="2.200" height="2.600" fill="#8a8a8a"/>
</g>
<path d="M244.5 206.6A27.6 27.6 0 1 1 291.3 206.6C286.8 213.6 284.6 218.5 283.1 227.5L252.7 227.5C251.2 218.5 249.0 213.6 244.5 206.6Z" fill="#ffffff" fill-opacity="0.12" stroke="#a6a6a6" stroke-width="0.8"/>
<path d="M255.7 192.800q12.200 4.600 24.400 0" fill="none" stroke="#c4c4c4" stroke-width="1.600" stroke-linecap="round"/>
<path d="M255.7 193L263.1 228M280.1 193L272.7 228M261.3 203L264.7 228M274.5 203L271.1 228" fill="none" stroke="#c4c4c4" stroke-width="0.800"/>
<g transform="translate(0 -0.7)">
<path d="M252.6 228v11.500c0 6 4.200 9.800 9.600 10.700h11.400c5.400-0.900 9.600-4.700 9.600-10.700v-11.500z" fill="#323232"/>
<ellipse cx="267.925" cy="228.200" rx="15.300" ry="3.700" fill="#2c2c2c"/>
<ellipse cx="267.925" cy="228.500" rx="13.300" ry="2.700" fill="#484848"/>
<path d="M264.3 226v5.200M271.5 226v5.200" stroke="#262626" stroke-width="1"/>
<path d="M260.6 249.500h5.400l-0.900 9h-3.600z" fill="#2b2b2b"/>
<rect x="262.2" y="258.400" width="2.200" height="2.600" fill="#8a8a8a"/>
<path d="M269.9 249.500h5.400l-0.900 9h-3.600z" fill="#2b2b2b"/>
<rect x="271.5" y="258.400" width="2.200" height="2.600" fill="#8a8a8a"/>
</g>
<g>
<path d="M376.9 327.200H427v95.600H376.9a2 2 0 0 1-2-2V329.200a2 2 0 0 1 2-2z" fill="#d18d52"/>
<path d="M427 327.200h121.100a2.600 2.600 0 0 1 2.600 2.600v90.400a2.600 2.600 0 0 1-2.600 2.600H427z" fill="#333333"/>
<rect x="358.600" y="336.600" width="16.400" height="31.700" fill="#b9b9b9"/>
<rect x="358.600" y="339.500" width="3.600" height="27" fill="#a6a6a6"/>
<rect x="358.600" y="380.800" width="16.400" height="27.200" fill="#b3b3b3"/>
<rect x="358.600" y="377.600" width="10.600" height="32.600" rx="1" fill="#8b8b8b"/>
<rect x="350.500" y="330.600" width="8.400" height="87.200" rx="1.800" fill="#333333"/>
<circle cx="383.700" cy="352.900" r="5.200" fill="#cb864b" stroke="#b9763f" stroke-width="0.500"/>
<circle cx="383.700" cy="394.600" r="5.200" fill="#cb864b" stroke="#b9763f" stroke-width="0.500"/>
<path d="M383.700 349.300v7.200M383.700 391.200v6.800M380.300 394.600h6.800" stroke="#3a2a1a" stroke-width="0.9" fill="none"/>
<text transform="translate(490.800 393.300) rotate(-90) scale(0.75 1)" text-anchor="start" font-size="33" letter-spacing="6" fill="#ececec" stroke="#ececec" stroke-width="0.500" font-family="'Liberation Sans',sans-serif">9V</text>
<rect x="335.400" y="369.100" width="4" height="2.600" rx="0.600" fill="#9a9a9a"/>
<path d="M340 370.400h11" stroke="#2b2b2b" stroke-width="1.100" fill="none"/>
<ellipse cx="342.800" cy="370.400" rx="4.500" ry="2.500" fill="#2b2b2b"/>
<rect x="335.400" y="378.700" width="4" height="2.600" rx="0.600" fill="#9a9a9a"/>
<path d="M340 380h11" stroke="#c8232c" stroke-width="1.100" fill="none"/>
<ellipse cx="343" cy="380" rx="4.600" ry="2.500" fill="#cc1f2a"/>
</g>
<rect x="2.20" y="0.00" width="7.9" height="8.5" fill="#e0453a"/>
<rect x="11.20" y="0.00" width="7.9" height="8.5" fill="#ee6b3a"/>
<rect x="20.20" y="0.00" width="7.9" height="8.5" fill="#f09b4b"/>
<text x="6.15 15.15 24.15" y="6.80" text-anchor="middle" font-size="6.4" font-weight="700" fill="#fff" fill-opacity="0.92">TIN</text>
<rect x="2.20" y="10.00" width="7.9" height="7.7" fill="#2fa24f"/>
<rect x="11.20" y="10.00" width="7.9" height="7.7" fill="#7ec242"/>
<rect x="20.20" y="10.00" width="7.9" height="7.7" fill="#d4cb48"/>
<text x="6.15 15.15 24.15" y="16.20" text-anchor="middle" font-size="6.4" font-weight="700" fill="#fff" fill-opacity="0.92">KER</text>
<rect x="2.20" y="19.40" width="7.9" height="7.7" fill="#1a60a9"/>
<rect x="11.20" y="19.40" width="7.9" height="7.7" fill="#4791d6"/>
<rect x="20.20" y="19.40" width="7.9" height="7.7" fill="#86b6e2"/>
<text x="6.15 15.15 24.15" y="25.60" text-anchor="middle" font-size="6.4" font-weight="700" fill="#fff" fill-opacity="0.92">CAD</text>
<rect x="646.300" y="0" width="30.700" height="28.600" fill="#1e8fd6"/>
<g fill="#fff"><path d="M658 8.100h2.800a0.800 0.800 0 0 0 1.600 0h2.800a1.100 1.100 0 0 1 1.100 1.100v9.900a1.100 1.100 0 0 1-1.100 1.100h-7.200a1.100 1.100 0 0 1-1.100-1.100v-9.900a1.100 1.100 0 0 1 1.100-1.100z"/><rect x="655.500" y="10.2" width="12.200" height="1.400" fill-opacity="0.620"/><rect x="655.500" y="13.4" width="12.200" height="1.400" fill-opacity="0.620"/><rect x="655.500" y="16.6" width="12.200" height="1.400" fill-opacity="0.620"/></g>
<g fill="none" stroke="#3b3f45" stroke-width="1.200"><rect x="688.900" y="8.600" width="7.200" height="10.800" rx="0.600"/><path d="M686.200 11h2.700M686.200 14h2.700M686.200 17h2.700M696.100 11h2.700M696.100 14h2.700M696.100 17h2.700" stroke-width="1.400"/></g>
<g><rect x="716.400" y="9.400" width="13.600" height="3.200" fill="#3a3e44"/><g fill="none" stroke="#6e7278" stroke-width="0.700"><rect x="716.750" y="9.750" width="12.900" height="9.500"/><path d="M716.400 14.800h13.600M716.400 17h13.600M721 12.600v6.800M725.500 12.600v6.800"/></g></g>
<rect x="738" y="0" width="0.800" height="29" fill="#ececee"/>
<g><clipPath id="av"><circle cx="754.300" cy="14.200" r="13.700"/></clipPath><circle cx="754.300" cy="14.200" r="13.700" fill="#4680cf"/><g clip-path="url(#av)"><circle cx="754.300" cy="13" r="6.500" fill="#f1f2f5"/><ellipse cx="754.300" cy="29" rx="7.800" ry="8" fill="#e6e8ee"/></g></g>
<rect x="88.0" y="30" width="0.800" height="27.300" fill="#e3e4e9"/>
<rect x="147.6" y="30" width="0.800" height="27.300" fill="#e3e4e9"/>
<rect x="206.6" y="30" width="0.800" height="27.300" fill="#e3e4e9"/>
<rect x="297.8" y="30" width="0.800" height="27.300" fill="#e3e4e9"/>
<rect x="357.6" y="30" width="0.800" height="27.300" fill="#e3e4e9"/>
<rect x="711.4" y="30" width="0.800" height="27.300" fill="#e3e4e9"/>
<g fill="none" stroke="#d3d6dc" stroke-width="1"><rect x="8.600" y="36.700" width="9" height="9.600" rx="1"/><rect x="12.400" y="40.300" width="9.600" height="10" rx="1" fill="#f4f5f8"/></g>
<g fill="none" stroke="#d3d6dc" stroke-width="1"><rect x="37.600" y="38.200" width="9.600" height="12" rx="1"/><rect x="40.400" y="36.400" width="4" height="3" rx="0.800" fill="#d3d6dc"/><rect x="43.600" y="42.600" width="6.800" height="7.600" rx="0.800" fill="#f4f5f8"/></g>
<g fill="none" stroke="#cdd0d7" stroke-width="1.200"><path d="M67.800 38.200h12.200M71.700 38v-2.200h4.400v2.200M69 38.600v10.400a1.500 1.500 0 0 0 1.500 1.500h6.800a1.500 1.500 0 0 0 1.500-1.500V38.600M71.700 41v7M73.900 41v7M76.100 41v7"/></g>
<path d="M98.200 43l5.300-3.600v2.400c4.300 0.200 6.900 1.900 7.800 5.200c-2-1.600-4.300-2.300-7.800-2.300v2.300z" fill="#2f3c52"/>
<path d="M139.400 43l-5.300-3.600v2.400c-4.300 0.200-6.900 1.900-7.800 5.200c2-1.600 4.300-2.300 7.800-2.300v2.300z" fill="#c8cbd2"/>
<g fill="none" stroke="#43474e" stroke-width="1.500" stroke-linejoin="round"><path d="M158.400 36.600h10.000a2 2 0 0 1 2 2v8.200a2 2 0 0 1-2 2h-3l-2.100 2.700l-2.100-2.700h-2.800a2 2 0 0 1-2-2v-8.200a2 2 0 0 1 2-2z"/><path d="M159.800 40h7.200M159.800 42.700h5.400M159.800 45.400h7.200" stroke-width="1.400"/></g>
<g fill="none" stroke="#43474e" stroke-width="1.500" stroke-linejoin="round"><path d="M187.600 36.600h10.000a2 2 0 0 1 2 2v8.200a2 2 0 0 1-2 2h-3l-2.100 2.700l-2.100-2.700h-2.800a2 2 0 0 1-2-2v-8.200a2 2 0 0 1 2-2z"/><path d="M187 42.800q5.600-7 11.200 0q-5.600 7-11.200 0z" fill="#43474e" stroke="none"/></g><ellipse cx="192.600" cy="42.800" rx="2" ry="1.600" fill="#f4f5f8"/>
<rect x="211.600" y="32.600" width="37" height="21" rx="2" fill="#f5f6f9" stroke="#e9eaee" stroke-width="0.800"/>
<rect x="218" y="37.700" width="12.200" height="12.200" rx="2.400" fill="#3db54a"/>
<path d="M240.300 42.300h4.400l-2.200 2.600z" fill="#2b2e33"/>
<rect x="253.600" y="32.600" width="39.600" height="21" rx="2" fill="#f5f6f9" stroke="#e9eaee" stroke-width="0.800"/>
<path d="M260 42.700h11" stroke="#3db54a" stroke-width="2.200" stroke-linecap="round"/><path d="M272.500 42.700h2.300" stroke="#7cc985" stroke-width="1.600" stroke-linecap="round"/>
<path d="M285 42.300h4.400l-2.200 2.600z" fill="#2b2e33"/>
<g fill="none" stroke="#cdd0d6" stroke-width="1.300" stroke-linejoin="round"><path d="M317 37.600l-7.600 6.800l3.400 3.200z"/><path d="M309.400 38.800q-4.600 2.600-3 7.600"/></g>
<g fill="none" stroke="#d0d3d9" stroke-width="1.200"><path d="M341.900 34.300v17.800"/><path d="M339.500 38.400v10.400h-6z"/><path d="M344.300 38.400v10.400h6z"/></g>
<rect x="553.200" y="33.400" width="58.400" height="19.600" rx="2" fill="#f6f7fa" stroke="#e6e7eb" stroke-width="0.800"/>
<g><rect x="559.300" y="38.600" width="13" height="9.600" rx="0.800" fill="none" stroke="#3f434a" stroke-width="1.100"/><rect x="559.300" y="38.400" width="13" height="2.400" fill="#3f434a"/><path d="M563.600 42.600l-1.800 1.700l1.800 1.700M566.200 46.400l1.600-4.200" fill="none" stroke="#3f434a" stroke-width="1"/><path d="M568.800 46h1.600" stroke="#3f434a" stroke-width="1"/></g>
<rect x="615.800" y="33.800" width="91.600" height="18.900" rx="2" fill="#2fb457"/>
<rect x="716" y="33.600" width="48.200" height="19.400" rx="2" fill="#f6f7fa" stroke="#e6e7eb" stroke-width="0.800"/>
<circle cx="15.200" cy="73" r="9.500" fill="#f7f8fa" stroke="#cdced1" stroke-width="1.200"/>
<path d="M10.600 71.300v-1.500q0-1.400 1.400-1.400h1.500M16.700 68.400h1.500q1.400 0 1.400 1.400v1.500M19.600 74.500v1.500q0 1.400-1.400 1.400h-1.500M13.500 77.400h-1.500q-1.400 0-1.400-1.400v-1.500" fill="none" stroke="#e0e1e4" stroke-width="1"/>
</svg>
<span class="t" id="t_title" style="font-size:10.2px;color:#50545b;top:13.9px;left:40.0px;transform-origin:0 50%;transform:scaleX(1.054);">circuito 4</span>
<span class="t" id="t_saved" style="font-size:9.9px;color:#c0c3c8;top:14.1px;left:467.6px;transform-origin:0 50%;transform:scaleX(1.036);">Se han guardado todos los cambios.</span>
<span class="t" id="t_sim" style="font-size:10.0px;color:#858990;top:43.9px;left:369.0px;transform-origin:0 50%;transform:scaleX(1.033);">Hora de simulador: 00:00:07</span>
<span class="t" id="t_code" style="font-size:10.0px;color:#62666c;top:43.7px;left:577.8px;transform-origin:0 50%;transform:scaleX(0.859);">Código</span>
<span class="t" id="t_stop" style="font-size:10.4px;color:#e2fceb;top:43.6px;font-weight:700;left:622.8px;transform-origin:0 50%;transform:scaleX(0.807);">Detener simulación</span>
<span class="t" id="t_send" style="font-size:10.0px;color:#62666c;top:43.7px;left:724.0px;transform-origin:0 50%;transform:scaleX(0.859);">Enviar a</span>
<span class="t" id="t_comp" style="font-size:6.6px;color:#63676d;top:71.0px;left:614.6px;transform-origin:0 50%;transform:scaleX(0.959);">Componentes</span>
<span class="t" id="t_basic" style="font-size:9.6px;color:#3f4349;top:80.9px;left:614.6px;transform-origin:0 50%;transform:scaleX(0.966);">Básico</span>
<span class="t" id="t_search" style="font-size:9.6px;color:#878b91;top:112.2px;left:613.2px;transform-origin:0 50%;transform:scaleX(0.963);">Buscar</span>
<span class="t c" id="l000" style="font-size:7.3px;color:#666a70;top:180.8px;left:631.70px;transform:translateX(-50%) scaleX(0.921);">Resistencia</span>
<span class="t c" id="l010" style="font-size:7.3px;color:#666a70;top:180.8px;left:685.30px;transform:translateX(-50%) scaleX(0.814);">LED</span>
<span class="t c" id="l020" style="font-size:7.3px;color:#666a70;top:180.8px;left:737.90px;transform:translateX(-50%) scaleX(0.928);">Pulsador</span>
<span class="t c" id="l100" style="font-size:7.3px;color:#666a70;top:249.8px;left:631.70px;transform:translateX(-50%) scaleX(0.960);">Potenciómetro</span>
<span class="t c" id="l110" style="font-size:7.3px;color:#666a70;top:249.8px;left:685.30px;transform:translateX(-50%) scaleX(0.909);">Condensador</span>
<span class="t c" id="l120" style="font-size:7.3px;color:#666a70;top:249.8px;left:738.60px;transform:translateX(-50%) scaleX(1.012);">Interruptor</span>
<span class="t c" id="l121" style="font-size:7.3px;color:#666a70;top:257.8px;left:738.60px;transform:translateX(-50%) scaleX(0.945);">deslizante</span>
<span class="t c" id="l200" style="font-size:7.3px;color:#666a70;top:318.8px;left:631.70px;transform:translateX(-50%) scaleX(0.911);">Pila de 9 V</span>
<span class="t c" id="l210" style="font-size:7.3px;color:#666a70;top:318.8px;left:685.30px;transform:translateX(-50%) scaleX(0.933);">Pila plana de 3</span>
<span class="t c" id="l211" style="font-size:7.3px;color:#666a70;top:326.4px;left:685.30px;transform:translateX(-50%) scaleX(0.920);">V</span>
<span class="t c" id="l220" style="font-size:7.3px;color:#666a70;top:318.8px;left:738.60px;transform:translateX(-50%) scaleX(0.880);">Pila de 1,5 V</span>
<span class="t c" id="l300" style="font-size:7.3px;color:#666a70;top:387.8px;left:631.70px;transform:translateX(-50%) scaleX(0.907);">Placa de</span>
<span class="t c" id="l301" style="font-size:7.3px;color:#666a70;top:395.8px;left:633.60px;transform:translateX(-50%) scaleX(0.900);">pruebas...</span>
<span class="t c" id="l310" style="font-size:7.3px;color:#666a70;top:387.8px;left:685.30px;transform:translateX(-50%) scaleX(0.950);">micro:bit</span>
<span class="t c" id="l320" style="font-size:7.3px;color:#666a70;top:387.8px;left:738.60px;transform:translateX(-50%) scaleX(0.934);">Arduino Uno</span>
<span class="t c" id="l321" style="font-size:7.3px;color:#666a70;top:395.8px;left:738.60px;transform:translateX(-50%) scaleX(0.778);">R3</span>
<span class="t c" id="l400" style="font-size:7.3px;color:#666a70;top:456.8px;left:631.70px;transform:translateX(-50%) scaleX(0.962);">Motor de</span>
<span class="t c" id="l401" style="font-size:7.3px;color:#666a70;top:464.2px;left:631.70px;transform:translateX(-50%) scaleX(0.983);">vibración</span>
<span class="t c" id="l410" style="font-size:7.3px;color:#666a70;top:456.8px;left:685.30px;transform:translateX(-50%) scaleX(0.893);">Motor de CC</span>
<div style="left:715.5px;top:450.8px;width:46.3px;height:12px;overflow:hidden"><span class="t" id="l420" style="font-size:7.3px;color:#666a70;top:6px;left:0;transform-origin:0 50%;transform:scaleX(0.958);">Microservomotor</span></div>
<span class="t c" id="l500" style="font-size:7.3px;color:#666a70;top:525.8px;left:631.70px;transform:translateX(-50%) scaleX(0.945);">Motor de</span>
<span class="t c" id="l510" style="font-size:7.3px;color:#666a70;top:525.8px;left:685.30px;transform:translateX(-50%) scaleX(0.956);">Transistor</span>
<span class="t c" id="l520" style="font-size:7.3px;color:#666a70;top:525.8px;left:738.60px;transform:translateX(-50%) scaleX(0.787);">LED RGB</span>
<div id="leftedge"></div><div id="leftedge2"></div>
</div>
</body>
</html>
